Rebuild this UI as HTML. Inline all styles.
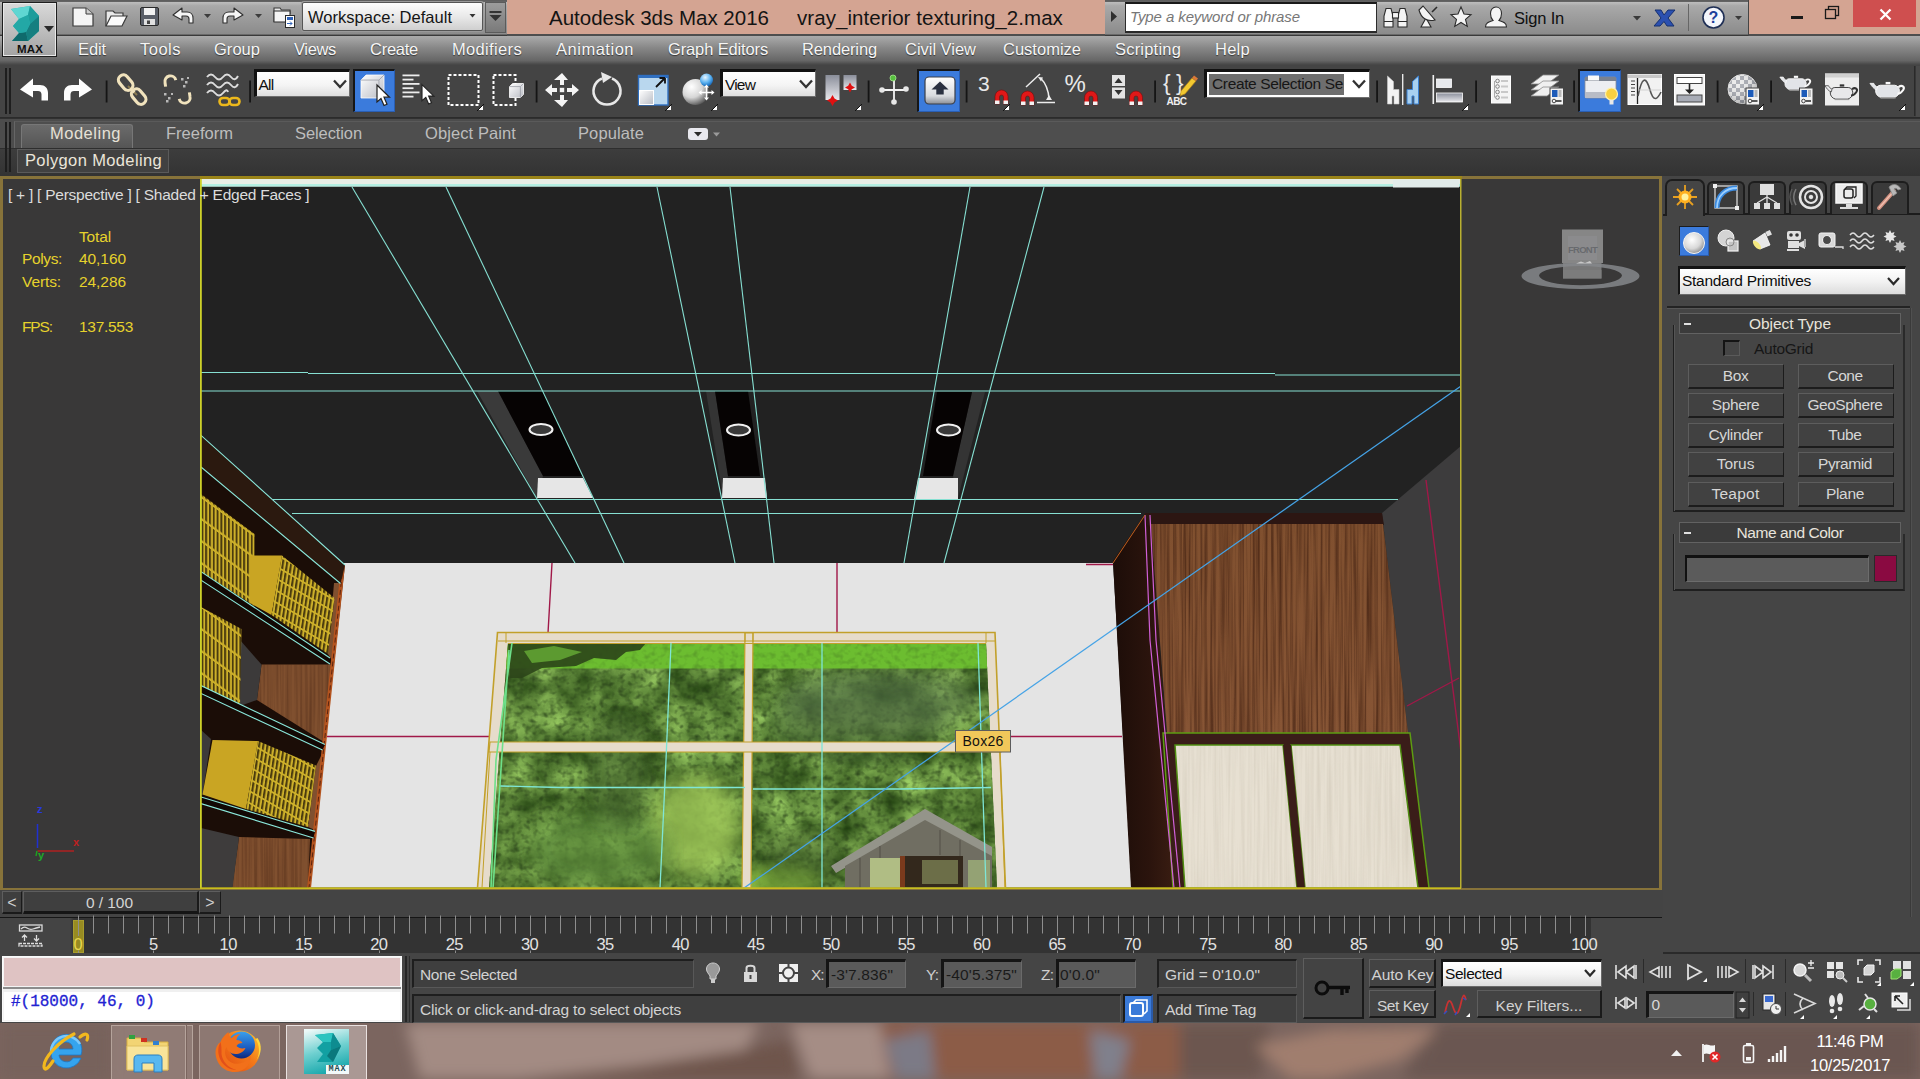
<!DOCTYPE html>
<html lang="en"><head><meta charset="utf-8"><title>Autodesk 3ds Max 2016 - vray_interior texturing_2.max</title>
<style>
html,body{margin:0;padding:0;background:#454545;}
body{width:1920px;height:1079px;position:relative;overflow:hidden;font-family:"Liberation Sans",sans-serif;}
.t{position:absolute;white-space:nowrap;}
.b{position:absolute;box-sizing:border-box;}
svg{position:absolute;overflow:visible;}
.sh{text-shadow:0 1px 1px rgba(0,0,0,.55);}
</style></head><body>
<div class="b " style="left:0px;top:0px;width:507px;height:35.5px;background:linear-gradient(#5e5e5e 0,#5e5e5e 4%,#bcbcbc 7%,#a9a9a9 16%,#8b8b8b 95%,#3a3a3a 97%);"></div>
<div class="b " style="left:507px;top:0px;width:598px;height:34px;background:#d4a492;"></div>
<div class="b " style="left:507px;top:34px;width:598px;height:1.5px;background:#4e4e4e;"></div>
<div class="b " style="left:1105px;top:0px;width:643px;height:35.5px;background:linear-gradient(#5e5e5e 0,#5e5e5e 4%,#bcbcbc 7%,#a9a9a9 16%,#8b8b8b 95%,#3a3a3a 97%);"></div>
<div class="b " style="left:1749px;top:0px;width:171px;height:34px;background:#d4a492;"></div>
<div class="b " style="left:1749px;top:34px;width:171px;height:1.5px;background:#4e4e4e;"></div>
<div class="b " style="left:1853px;top:0px;width:63px;height:26.5px;background:#cf4f4f;"></div>
<div class="b " style="left:0px;top:35.5px;width:1920px;height:29.5px;background:linear-gradient(#ababab,#888888 40%,#666666 85%,#484848 98%);"></div>
<div class="b " style="left:0px;top:65px;width:1920px;height:53px;background:#444444;border-bottom:1px solid #2b2b2b;"></div>
<div class="b " style="left:1916px;top:66px;width:4px;height:51px;background:#4a4a4a;"></div>
<div class="b " style="left:0px;top:118px;width:1920px;height:30px;background:#4c4c4c;border-top:1px solid #303030;"></div>
<div class="b " style="left:0px;top:148px;width:1920px;height:28px;background:linear-gradient(#3d3d3d,#333333);border-top:1px solid #2e2e2e;"></div>
<div class="b " style="left:14px;top:121px;width:1906px;height:27px;background:#4e4e4e;border-left:1px solid #666;border-top:1px solid #5a5a5a;"></div>
<div class="b " style="left:21px;top:124px;width:112px;height:24px;background:linear-gradient(#6b6b6b,#555555);border:1px solid #777;border-bottom:none;border-radius:3px 3px 0 0;"></div>
<div class="b " style="left:17px;top:149px;width:152px;height:24px;background:#414141;border:1px solid #5a5a5a;"></div>
<div class="b " style="left:5px;top:68px;width:2px;height:46px;background:#1e1e1e;"></div>
<div class="b " style="left:5px;top:122px;width:2px;height:50px;background:#1e1e1e;"></div>
<div class="b " style="left:9px;top:68px;width:2px;height:46px;background:#1e1e1e;"></div>
<div class="b " style="left:9px;top:122px;width:2px;height:50px;background:#1e1e1e;"></div>
<div class="b " style="left:2px;top:2px;width:55px;height:55px;background:linear-gradient(#d9d9d9,#bcbcbc 55%,#a3a3a3);border:1px solid #1d1d1d;box-shadow:inset 0 0 0 1px #e8e8e8;"></div>
<svg style="left:8px;top:5px" width="46" height="40" viewBox="0 0 46 40">
<polygon points="3,4 22,1 31,11 31,26 20,36 4,36 11,28 5,21 11,14" fill="#2bb5b2"/>
<polygon points="3,4 22,1 20,10 11,14" fill="#5fd6d2"/>
<polygon points="22,1 31,11 22,19 20,10" fill="#1d9c9b"/>
<polygon points="22,19 31,11 31,26 20,36 18,27" fill="#167f80"/>
<polygon points="4,36 11,28 18,27 20,36" fill="#0f6a6c"/>
<polygon points="5,21 11,14 20,10 22,19 18,27 11,28" fill="#23a8a6"/>
<polygon points="36,21 46,21 41,27" fill="#2a2a2a"/>
</svg><div class="t " style="left:17.0px;top:42.1px;font-size:11.5px;line-height:14px;color:#111;font-weight:bold;letter-spacing:0.146px;">MAX</div>
<svg style="left:70px;top:3px" width="230" height="30" viewBox="70 3 230 30">
<path d="M73 8h13l7 6v12h-20z" fill="#f4f4f4" stroke="#3a3a3a" stroke-width="1.2"/><path d="M86 8v6h7" fill="#cfcfcf" stroke="#3a3a3a" stroke-width="1"/>
<path d="M106 26v-15h7l2 2h8v3" fill="#e8e8e8" stroke="#3a3a3a" stroke-width="1.2"/><path d="M106 26l5-10h16l-5 10z" fill="#fafafa" stroke="#3a3a3a" stroke-width="1.2"/>
<rect x="140.500" y="7.500" width="18" height="18" rx="1.500" fill="#5a5f68" stroke="#2a2a2a"/><rect x="144" y="8" width="11" height="7" fill="#f2f2f2"/><rect x="144" y="19" width="11" height="6" fill="#e0e0e0"/><rect x="147" y="20.500" width="3" height="3.500" fill="#444"/>
<path d="M173 15l9-7v4h5c4 0 6 3 6 6v5h-4v-4c0-2-1-3-3-3h-4v4z" fill="#f6f6f6" stroke="#2f2f2f" stroke-width="1.100" stroke-linejoin="round"/>
<path d="M204 14h7l-3.500 4z" fill="#3c3c3c"/>
<path d="M243 15l-9-7v4h-5c-4 0-6 3-6 6v5h4v-4c0-2 1-3 3-3h4v4z" fill="#f6f6f6" stroke="#2f2f2f" stroke-width="1.100" stroke-linejoin="round"/>
<path d="M255 14h7l-3.500 4z" fill="#3c3c3c"/>
<path d="M274 22v-14h6l1.500 2h8.500v4" fill="#e6e6e6" stroke="#3a3a3a" stroke-width="1.100"/><rect x="274" y="11" width="16" height="11" fill="#f4f4f4" stroke="#3a3a3a" stroke-width="1.100"/>
<rect x="285.500" y="15.500" width="9" height="12" fill="#fff" stroke="#2a2a2a"/><rect x="287" y="17" width="6" height="3" fill="#2f62b8"/><path d="M287 23.500h5m-2-2l2 2-2 2" stroke="#2f62b8" fill="none"/>
</svg><div class="b " style="left:302px;top:2px;width:181px;height:29px;background:linear-gradient(#fdfdfd,#e9e9e9 50%,#cfcfcf);border:1px solid #555;border-radius:2px;box-shadow:0 0 0 1px #9a9a9a;"></div>
<div class="t " style="left:308.0px;top:6.7px;font-size:16.5px;line-height:20px;color:#151515;letter-spacing:0.020px;">Workspace: Default</div>
<svg style="left:468px;top:13px" width="10" height="6"><path d="M1.500 1h6l-3 3.500z" fill="#333"/></svg><div class="b " style="left:485px;top:2px;width:21px;height:31px;background:linear-gradient(#9c9c9c,#7a7a7a);border:1px solid #5b5b5b;"></div>
<svg style="left:488px;top:10px" width="16" height="12"><rect x="1.500" y="1" width="12" height="2" fill="#333"/><path d="M1.500 5h12l-6 6z" fill="#333"/></svg><div class="t " style="left:549.0px;top:5.2px;font-size:20.5px;line-height:25px;color:#141414;">Autodesk 3ds Max 2016</div>
<div class="t " style="left:797.0px;top:5.2px;font-size:20.5px;line-height:25px;color:#141414;letter-spacing:0.054px;">vray_interior texturing_2.max</div>
<svg style="left:1108px;top:9px" width="12" height="16"><path d="M3 2l6 5.500-6 5.500z" fill="#2e2e2e"/></svg><div class="b " style="left:1125px;top:2px;width:252px;height:31px;background:#ffffff;border:1px solid #2c2c2c;border-top:2px solid #1a1a1a;border-bottom:2px solid #2a2a2a;"></div>
<div class="t " style="left:1130.0px;top:7.7px;font-size:15px;line-height:18px;color:#777;font-style:italic;letter-spacing:-0.098px;">Type a keyword or phrase</div>
<svg style="left:1380px;top:2px" width="370" height="32" viewBox="1380 2 370 32">
<g fill="#f4f4f4" stroke="#2c2c2c" stroke-width="1.100">
<path d="M1384 27V16l2-7.500h5l2 7.500v11zM1407 27V16l-2-7.500h-5l-2 7.500v11z"/><rect x="1392.500" y="12.500" width="6" height="5.500"/><rect x="1384" y="21" width="9" height="1" fill="#2c2c2c" stroke="none"/><rect x="1398" y="21" width="9" height="1" fill="#2c2c2c" stroke="none"/>
<path d="M1421 27l5-9 5 9z"/><path d="M1419 10c2 8 8 12 16 10l-12-14z"/><path d="M1432 12l5-5" fill="none" stroke-width="1.600"/>
<path d="M1461 7l3 7 7 .6-5.500 4.800 1.800 7-6.300-3.900-6.300 3.900 1.800-7-5.500-4.800 7-.6z"/>
<path d="M1485.500 27c0-4 3-5 7.500-6.500-2-2-2.500-4-2.500-7 0-4 2.500-6.500 5.500-6.500s5.500 2.500 5.500 6.500c0 3-.5 5-2.500 7 4.500 1.500 7.500 2.500 7.500 6.500z"/>
</g>
<path d="M1633 16h8l-4 4.500z" fill="#3a3a3a"/>
<path d="M1655 10h6l3 5 4-5h7l-7 8 6 8h-7l-3-4.500-4 4.500h-6l7-8z" fill="#2b50b0" stroke="#17306f" stroke-width="1"/>
<rect x="1688" y="4" width="1" height="27" fill="#666"/>
<circle cx="1713.500" cy="17.500" r="10.500" fill="#f4f6fb" stroke="#1f2f55" stroke-width="1.600"/>
<path d="M1735 16h7l-3.500 4z" fill="#3a3a3a"/>
</svg><div class="t " style="left:1708.6px;top:7.7px;font-size:16px;line-height:19px;color:#1c3f9a;font-weight:bold;">?</div>
<div class="t " style="left:1514.0px;top:7.7px;font-size:16.5px;line-height:20px;color:#101010;letter-spacing:-0.192px;">Sign In</div>
<div class="b " style="left:1791px;top:15.5px;width:11.5px;height:3px;background:#1a1a1a;"></div>
<svg style="left:1824px;top:5px" width="18" height="16"><rect x="4.500" y="1.500" width="10" height="9" fill="none" stroke="#1a1a1a" stroke-width="1.300"/><rect x="1.500" y="4.500" width="10" height="9" fill="#d4a492" stroke="#1a1a1a" stroke-width="1.300"/></svg><svg style="left:1879px;top:8px" width="14" height="13"><path d="M1.500 1.500l10 10m0-10l-10 10" stroke="#fff" stroke-width="2.300"/></svg><div class="t sh" style="left:78.0px;top:39.2px;font-size:16.5px;line-height:20px;color:#f6f6f6;letter-spacing:-0.105px;">Edit</div>
<div class="t sh" style="left:140.0px;top:39.2px;font-size:16.5px;line-height:20px;color:#f6f6f6;letter-spacing:0.497px;">Tools</div>
<div class="t sh" style="left:214.0px;top:39.2px;font-size:16.5px;line-height:20px;color:#f6f6f6;letter-spacing:0.031px;">Group</div>
<div class="t sh" style="left:294.0px;top:39.2px;font-size:16.5px;line-height:20px;color:#f6f6f6;letter-spacing:-0.344px;">Views</div>
<div class="t sh" style="left:370.0px;top:39.2px;font-size:16.5px;line-height:20px;color:#f6f6f6;letter-spacing:-0.253px;">Create</div>
<div class="t sh" style="left:452.0px;top:39.2px;font-size:16.5px;line-height:20px;color:#f6f6f6;letter-spacing:0.340px;">Modifiers</div>
<div class="t sh" style="left:556.0px;top:39.2px;font-size:16.5px;line-height:20px;color:#f6f6f6;letter-spacing:0.516px;">Animation</div>
<div class="t sh" style="left:668.0px;top:39.2px;font-size:16.5px;line-height:20px;color:#f6f6f6;letter-spacing:-0.136px;">Graph Editors</div>
<div class="t sh" style="left:802.0px;top:39.2px;font-size:16.5px;line-height:20px;color:#f6f6f6;letter-spacing:-0.125px;">Rendering</div>
<div class="t sh" style="left:905.0px;top:39.2px;font-size:16.5px;line-height:20px;color:#f6f6f6;letter-spacing:-0.023px;">Civil View</div>
<div class="t sh" style="left:1003.0px;top:39.2px;font-size:16.5px;line-height:20px;color:#f6f6f6;letter-spacing:0.007px;">Customize</div>
<div class="t sh" style="left:1115.0px;top:39.2px;font-size:16.5px;line-height:20px;color:#f6f6f6;letter-spacing:0.201px;">Scripting</div>
<div class="t sh" style="left:1215.0px;top:39.2px;font-size:16.5px;line-height:20px;color:#f6f6f6;letter-spacing:0.266px;">Help</div>
<div class="t " style="left:50.0px;top:123.2px;font-size:16.5px;line-height:20px;color:#e6e1d6;letter-spacing:0.506px;">Modeling</div>
<div class="t " style="left:166.0px;top:123.2px;font-size:16.5px;line-height:20px;color:#bdbdbd;letter-spacing:0.010px;">Freeform</div>
<div class="t " style="left:295.0px;top:123.2px;font-size:16.5px;line-height:20px;color:#bdbdbd;letter-spacing:-0.095px;">Selection</div>
<div class="t " style="left:425.0px;top:123.2px;font-size:16.5px;line-height:20px;color:#bdbdbd;letter-spacing:0.096px;">Object Paint</div>
<div class="t " style="left:578.0px;top:123.2px;font-size:16.5px;line-height:20px;color:#bdbdbd;letter-spacing:0.111px;">Populate</div>
<div class="t " style="left:25.0px;top:149.7px;font-size:16.5px;line-height:20px;color:#ebe6da;letter-spacing:0.366px;">Polygon Modeling</div>
<div class="b " style="left:688px;top:128px;width:20px;height:12px;background:#e8e8ee;border-radius:3px;"></div>
<svg style="left:693px;top:131px" width="30" height="8"><path d="M1 1h8l-4 4.500z" fill="#2a2a2a"/><path d="M20 1.500h7l-3.500 4z" fill="#9a9a9a"/></svg><div class="b " style="left:353px;top:69px;width:42px;height:43px;background:#3b7bdc;border:2px solid #161616;border-right:1px solid #2a5fb4;border-bottom:1px solid #2a5fb4;"></div>
<div class="b " style="left:917px;top:69px;width:43px;height:43px;background:#3b7bdc;border:2px solid #161616;border-right:1px solid #2a5fb4;border-bottom:1px solid #2a5fb4;"></div>
<div class="b " style="left:1578px;top:69px;width:43px;height:43px;background:#3b7bdc;border:2px solid #161616;border-right:1px solid #2a5fb4;border-bottom:1px solid #2a5fb4;"></div>
<div class="b " style="left:254px;top:69px;width:96px;height:28px;background:linear-gradient(#ffffff,#f4f4f4 55%,#dedede);border:1px solid #6e6e6e;border-top:3px solid #121212;border-left:3px solid #121212;"></div>
<div class="t " style="left:258.5px;top:75.2px;font-size:15.5px;line-height:19px;color:#101010;letter-spacing:-0.740px;">All</div>
<div class="b " style="left:720px;top:69px;width:96px;height:28px;background:linear-gradient(#ffffff,#f4f4f4 55%,#dedede);border:1px solid #6e6e6e;border-top:3px solid #121212;border-left:3px solid #121212;"></div>
<div class="t " style="left:725.0px;top:75.2px;font-size:15.5px;line-height:19px;color:#101010;letter-spacing:-0.828px;">View</div>
<div class="b " style="left:1204px;top:69px;width:166px;height:29px;background:#ffffff;border:1px solid #6e6e6e;border-top:3px solid #121212;border-left:3px solid #121212;"></div>
<div class="b " style="left:1209px;top:73.5px;width:135px;height:21.5px;background:#6e6e6e;"></div>
<div class="t " style="left:1212.0px;top:74.2px;font-size:15.5px;line-height:19px;color:#161616;letter-spacing:-0.363px;">Create Selection Se</div>
<svg style="left:0;top:64px" width="1920" height="54" viewBox="0 64 1920 54">
<defs><linearGradient id="cubeg" x1="0" x2="1" y1="0" y2="1"><stop offset="0" stop-color="#ffffff"/><stop offset="1" stop-color="#b9bcc4"/></linearGradient><radialGradient id="sphg" cx=".35" cy=".3" r=".75"><stop offset="0" stop-color="#ffffff"/><stop offset=".55" stop-color="#d6d6d6"/><stop offset="1" stop-color="#555"/></radialGradient><radialGradient id="bsph" cx=".4" cy=".3" r=".7"><stop offset="0" stop-color="#e8f6ff"/><stop offset=".6" stop-color="#58b0f0"/><stop offset="1" stop-color="#1868b8"/></radialGradient><linearGradient id="silv" x1="0" x2="0" y1="0" y2="1"><stop offset="0" stop-color="#8a8e9a"/><stop offset="1" stop-color="#e8e8ec"/></linearGradient><linearGradient id="keyg" x1="0" x2="0" y1="0" y2="1"><stop offset="0" stop-color="#ffffff"/><stop offset=".7" stop-color="#d8dade"/><stop offset="1" stop-color="#8a8e96"/></linearGradient><pattern id="chk" width="8" height="8" patternUnits="userSpaceOnUse"><rect width="8" height="8" fill="#e8e8e8"/><rect width="4" height="4" fill="#8a8e98"/><rect x="4" y="4" width="4" height="4" fill="#8a8e98"/></pattern></defs>
<path d="M334 80.500l6 6.500 6-6.500" fill="none" stroke="#333" stroke-width="2.300"/><path d="M800 80.500l6 6.500 6-6.500" fill="none" stroke="#333" stroke-width="2.300"/><path d="M1353 80.500l6 6.500 6-6.500" fill="none" stroke="#333" stroke-width="2.300"/><path d="M20 89.500l13-11v6.500h7c5 0 8 3 8 8v7.500h-6.500v-6c0-2.500-1.500-3.500-3.500-3.500h-5v6.500z" fill="#fdfdfd"/><path d="M92 89.500l-13-11v6.500h-7c-5 0-8 3-8 8v7.500h6.500v-6c0-2.500 1.500-3.500 3.500-3.500h5v6.500z" fill="#fdfdfd"/><rect x="105.7" y="80.500" width="1.800" height="22" fill="#151515"/><rect x="249.2" y="80.500" width="1.800" height="22" fill="#151515"/><rect x="535.7" y="80.500" width="1.800" height="22" fill="#151515"/><rect x="867.7" y="80.500" width="1.800" height="22" fill="#151515"/><rect x="965.7" y="80.500" width="1.800" height="22" fill="#151515"/><rect x="1154.2" y="80.500" width="1.800" height="22" fill="#151515"/><rect x="1376.2" y="80.500" width="1.800" height="22" fill="#151515"/><rect x="1475.2" y="80.500" width="1.800" height="22" fill="#151515"/><rect x="1573.2" y="80.500" width="1.800" height="22" fill="#151515"/><rect x="1716.7" y="80.500" width="1.800" height="22" fill="#151515"/><rect x="1770.2" y="80.500" width="1.800" height="22" fill="#151515"/><g fill="none" stroke="#f1e3bd" stroke-width="3.200"><rect x="-5" y="-9" width="10" height="17" rx="5" transform="translate(126,83) rotate(-40)"/><rect x="-5" y="-9" width="10" height="17" rx="5" transform="translate(139,97) rotate(-40)"/></g><path d="M128 86l9 9" stroke="#8a7a50" stroke-width="2"/><path d="M128 86l9 9" stroke="#f1e3bd" stroke-width="3" stroke-dasharray="0 3 6 9"/><g fill="none" stroke="#f1e3bd" stroke-width="3"><path d="M165 86v-4a5.500 5.500 0 0 1 11-1" transform="rotate(-8 170 82)"/><path d="M190 93v4a5.500 5.500 0 0 1-11 1" transform="rotate(-8 185 97)"/></g><g fill="#b8b8b8"><rect x="181" y="78" width="2.500" height="2.500"/><rect x="185" y="81" width="2.500" height="2.500"/><rect x="183" y="85" width="2.500" height="2.500"/><rect x="187" y="77" width="2" height="2"/><rect x="164" y="93" width="2.500" height="2.500"/><rect x="168" y="97" width="2.500" height="2.500"/><rect x="166" y="100" width="2.500" height="2.500"/><rect x="171" y="93" width="2" height="2"/></g><g fill="none" stroke="#dcdcdc" stroke-width="2"><path d="M207 77q4-5 8 0t8 0 8 0 7-1M207 85q4-5 8 0t8 0 8 0 7-1M207 93q4-5 8 0t8 0 5-1"/></g><g fill="none" stroke="#ecb81c" stroke-width="2.600"><rect x="219.500" y="98" width="10" height="7" rx="3.500"/><rect x="229.500" y="98" width="10" height="7" rx="3.500"/></g><path d="M361 80.06l5.06-5.06h17.94v17.94l-5.06 5.06h-17.94z" fill="url(#cubeg)" stroke="#fff" stroke-width=".8"/><path d="M361 80.06h17.94v17.94M378.94 80.06l5.06-5.06" fill="none" stroke="#9a9da6" stroke-width=".8"/><path transform="translate(377,85) scale(1)" d="M0 0v17l4-3.500 3 7 3-1.300-3-7h5.500z" fill="#fff" stroke="#222" stroke-width="1.200"/><rect x="402.500" y="74.5" width="17" height="1.800" fill="#ececec"/><rect x="402.500" y="78.7" width="11" height="1.800" fill="#ececec"/><rect x="402.500" y="83" width="17" height="1.800" fill="#ececec"/><rect x="402.500" y="87.3" width="11" height="1.800" fill="#ececec"/><rect x="402.500" y="91.5" width="17" height="1.800" fill="#ececec"/><rect x="402.500" y="95.7" width="11" height="1.800" fill="#ececec"/><path transform="translate(422,84.5) scale(0.95)" d="M0 0v17l4-3.500 3 7 3-1.300-3-7h5.500z" fill="#fff" stroke="#222" stroke-width="1.200"/><rect x="448.500" y="75" width="30" height="30" fill="none" stroke="#fff" stroke-width="2" stroke-dasharray="3 2"/><path d="M478 110l5-5v5z" fill="#fff"/><path d="M477 111l7-7" stroke="#111" stroke-width="1"/><rect x="493.500" y="75" width="22" height="30" fill="none" stroke="#fff" stroke-width="2" stroke-dasharray="3 2"/><path d="M509.5 86.58l3.08-3.08h10.92v10.92l-3.08 3.08h-10.92z" fill="url(#cubeg)" stroke="#fff" stroke-width=".8"/><path d="M509.5 86.58h10.92v10.92M520.42 86.58l3.08-3.08" fill="none" stroke="#9a9da6" stroke-width=".8"/><g transform="translate(562,90)" fill="#f4f4f4"><path d="M0-17l6 7h-4v5h-4v-5h-6zM0 17l6-7h-4v-5h-4v5h-6zM-17 0l7-6v4h5v4h-5v4zM17 0l-7-6v4h-5v4h5v4z"/><rect x="-2.200" y="-2.200" width="4.400" height="4.400"/></g><path d="M602 78.500a13.500 13.500 0 1 0 10 0" fill="none" stroke="#e8e8e8" stroke-width="2.600"/><path d="M601 72l11 5-9 6z" fill="#e8e8e8"/><rect x="638.500" y="75.500" width="29.500" height="29.500" fill="#b9d7ee" stroke="#2f6fc0" stroke-width="1.400"/><rect x="638.500" y="75.500" width="29.500" height="2.500" fill="#2f6fc0"/><rect x="639.500" y="90.500" width="14" height="14" fill="url(#cubeg)" stroke="#fff"/><path d="M656 87l9-9m0 0h-5.500m5.500 0v5.500" stroke="#111" stroke-width="1.800" fill="none"/><path d="M666 110l5-5v5z" fill="#fff"/><path d="M665 111l7-7" stroke="#111" stroke-width="1"/><circle cx="695.500" cy="92" r="13" fill="url(#sphg)"/><circle cx="706.500" cy="80" r="6.500" fill="url(#bsph)"/><g stroke="#fff" stroke-width="1.500" fill="#fff"><path d="M706.500 86v13M700 92.500h13"/><path d="M706.500 84.500l2.500 3h-5zM706.500 100.500l2.500-3h-5zM698.500 92.500l3-2.500v5zM714.500 92.500l-3-2.500v5z" stroke="none"/></g><path d="M712 110l5-5v5z" fill="#fff"/><path d="M711 111l7-7" stroke="#111" stroke-width="1"/><rect x="825.500" y="75" width="14" height="25" fill="url(#silv)"/><rect x="843.500" y="75" width="13" height="15" fill="url(#silv)"/><path d="M832.500 95l2 3.500 3.500 2-3.500 2-2 3.500-2-3.500-3.500-2 3.500-2zM850 82.500l1.800 3.200 3.200 1.800-3.200 1.800-1.800 3.200-1.800-3.200-3.200-1.800 3.200-1.800z" fill="#e01010"/><path d="M856 110l5-5v5z" fill="#fff"/><path d="M855 111l7-7" stroke="#111" stroke-width="1"/><g transform="translate(894,90)"><path d="M0-11V10M-11 0H11" stroke="#f4f4f4" stroke-width="1.800"/><circle cx="-12" cy="0" r="2.800" fill="#e8e8e8"/><circle cx="12" cy="-1" r="2.800" fill="#e8e8e8"/><circle cx="0" cy="12" r="2.800" fill="#e8e8e8"/><circle cx="-1" cy="-12" r="3" fill="#58c040" stroke="#a8e890" stroke-width=".8"/></g><rect x="925" y="77" width="30" height="27" rx="4" fill="url(#keyg)" stroke="#3a3e48" stroke-width="1.200"/><path d="M940 81.500l8.500 8h-4.800v5h-7.400v-5h-4.800z" fill="#2a3040"/><g transform="translate(995,90)"><path d="M0 14V6.500a6.500 6.500 0 0 1 13 0V14h-4.500V7a2 2 0 0 0-4 0V14z" fill="#e01818" stroke="#7a0c0c" stroke-width=".6"/><rect x="0" y="10.500" width="4.500" height="3.500" fill="#f2f2f2"/><rect x="8.500" y="10.500" width="4.500" height="3.500" fill="#f2f2f2"/></g><path d="M1004 110l5-5v5z" fill="#fff"/><path d="M1003 111l7-7" stroke="#111" stroke-width="1"/><g transform="translate(1021,91)"><path d="M0 14V6.500a6.500 6.500 0 0 1 13 0V14h-4.500V7a2 2 0 0 0-4 0V14z" fill="#e01818" stroke="#7a0c0c" stroke-width=".6"/><rect x="0" y="10.500" width="4.500" height="3.500" fill="#f2f2f2"/><rect x="8.500" y="10.500" width="4.500" height="3.500" fill="#f2f2f2"/></g><path d="M1026 87l14-13M1040.500 78c5 5 8 12 8.500 21M1037 102.500h18" fill="none" stroke="#ececec" stroke-width="1.500"/><path d="M1038 77l5 .5-2 4zM1046 100l3-5 3 5z" fill="#ececec"/><g transform="translate(1084.5,91)"><path d="M0 14V6.500a6.500 6.500 0 0 1 13 0V14h-4.500V7a2 2 0 0 0-4 0V14z" fill="#e01818" stroke="#7a0c0c" stroke-width=".6"/><rect x="0" y="10.500" width="4.500" height="3.500" fill="#f2f2f2"/><rect x="8.500" y="10.500" width="4.500" height="3.500" fill="#f2f2f2"/></g><g transform="translate(1129.5,91)"><path d="M0 14V6.500a6.500 6.500 0 0 1 13 0V14h-4.500V7a2 2 0 0 0-4 0V14z" fill="#e01818" stroke="#7a0c0c" stroke-width=".6"/><rect x="0" y="10.500" width="4.500" height="3.500" fill="#f2f2f2"/><rect x="8.500" y="10.500" width="4.500" height="3.500" fill="#f2f2f2"/></g><rect x="1112" y="75" width="13" height="11" fill="#e4e4e4"/><rect x="1112" y="87.500" width="13" height="11" fill="#e4e4e4"/><path d="M1114.500 83l4-5 4 5zM1114.500 90l4 5 4-5z" fill="#333"/><path d="M1181 91l11-13 4 3-11 13-5 2z" fill="#f2c830" stroke="#a87818" stroke-width=".7"/><path d="M1192 78l2-2.500 4 3-2 2.500z" fill="#d87838"/><path d="M-100 -100l5-5v5z" fill="#fff"/><path d="M-1 1l7-7" stroke="#111" stroke-width="1"/><path d="M1387.500 104V76l6 5.500v8h5.500V104h-5v-8h-2v8z" fill="#f4f4f4" stroke="#c8c8c8" stroke-width=".6"/><rect x="1402" y="74" width="1.400" height="31" fill="#e8e8e8"/><path d="M1418.500 104V76l-6 5.500v8h-5.500V104h5v-8h2v8z" fill="#a8d0f0" stroke="#3a80d0" stroke-width="1"/><rect x="1432.500" y="75" width="1.600" height="29" fill="#f0f0f0"/><rect x="1436.500" y="79" width="15" height="8.500" fill="#e6e8ec" stroke="#fff" stroke-width=".8"/><rect x="1436.500" y="93" width="26" height="9" fill="url(#silv)" stroke="#fff" stroke-width=".8"/><path d="M1463 110l5-5v5z" fill="#fff"/><path d="M1462 111l7-7" stroke="#111" stroke-width="1"/><rect x="1491.500" y="76" width="19" height="27" fill="#f4f4f4" stroke="#fff"/><circle cx="1497.500" cy="81" r="1.800" fill="none" stroke="#777" stroke-width=".9"/><rect x="1501" y="80" width="7" height="2" fill="#c8c8c8"/><circle cx="1497.500" cy="86.5" r="1.800" fill="none" stroke="#777" stroke-width=".9"/><rect x="1501" y="85.5" width="7" height="2" fill="#c8c8c8"/><circle cx="1497.500" cy="92" r="1.800" fill="none" stroke="#777" stroke-width=".9"/><rect x="1501" y="91" width="7" height="2" fill="#c8c8c8"/><circle cx="1497.500" cy="97.5" r="1.800" fill="none" stroke="#777" stroke-width=".9"/><rect x="1501" y="96.5" width="7" height="2" fill="#c8c8c8"/><path d="M1494.500 81v16.500" stroke="#999" stroke-width=".8"/><path d="M1531 84l12-9h16l-12 9z" fill="#f0f0f0" stroke="#8a8a8a" stroke-width=".8"/><path d="M1531 90l12-9h16l-12 9z" fill="#f0f0f0" stroke="#8a8a8a" stroke-width=".8"/><path d="M1531 96l12-9h16l-12 9z" fill="#f0f0f0" stroke="#8a8a8a" stroke-width=".8"/><g transform="translate(1549.5,87.5)"><rect x=".5" y=".5" width="13.500" height="17" fill="#f2f2f2" stroke="#444"/><rect x="2.500" y="2.500" width="5.500" height="7" fill="#1c5ab8"/><rect x="9" y="2.500" width="3" height="7" fill="#b8b8b8"/><circle cx="4.500" cy="13.500" r="1.800" fill="none" stroke="#333" stroke-width=".9"/><rect x="6.500" y="12.700" width="5.500" height="1.600" fill="#333"/></g><rect x="1585" y="77" width="31" height="21" rx="1.500" fill="#eceef2" stroke="#8a8e98" stroke-width=".8"/><rect x="1585" y="77" width="31" height="4" fill="#7a8290"/><rect x="1588" y="75.500" width="11" height="5" fill="#fafafa"/><rect x="1585" y="92" width="31" height="6" fill="#b8bcc6"/><circle cx="1611.500" cy="94" r="6" fill="#f8d040" stroke="#fff1a8" stroke-width="1.200"/><rect x="1609.500" y="100" width="4" height="4.500" fill="#e8e8e8"/><rect x="1628" y="74.500" width="33.500" height="30" fill="#f2f2f2" stroke="#fff"/><rect x="1628" y="74.500" width="33.500" height="3.500" fill="#c8c8c8"/><path d="M1637.500 78v26" stroke="#222" stroke-width="1.300"/><path d="M1631 81h4M1631 84.500h4M1631 88h4M1631 91.500h4M1631 95h4" stroke="#444" stroke-width="1.200"/><path d="M1638 96c4-20 8-20 12-6s8 8 11 2" fill="none" stroke="#555" stroke-width="1.600"/><path d="M1638 90h23" stroke="#ccc" stroke-width=".8"/><rect x="1674.500" y="74.500" width="30" height="30.500" fill="#f4f4f4" stroke="#fff"/><rect x="1677" y="77.500" width="25" height="6" fill="#fff" stroke="#444" stroke-width="1"/><rect x="1677" y="95" width="25" height="7" fill="#a8acb6" stroke="#444" stroke-width="1"/><path d="M1689.500 84v6" stroke="#222" stroke-width="1.600"/><path d="M1685 89.500h9l-4.500 4.500z" fill="#222"/><circle cx="1742.500" cy="89" r="14.500" fill="url(#chk)" stroke="#e0e0e0" stroke-width="1"/><circle cx="1742.500" cy="89" r="14.500" fill="url(#sphg)" opacity=".35"/><g transform="translate(1745.5,87.5)"><rect x=".5" y=".5" width="13.500" height="17" fill="#f2f2f2" stroke="#444"/><rect x="2.500" y="2.500" width="5.500" height="7" fill="#1c5ab8"/><rect x="9" y="2.500" width="3" height="7" fill="#b8b8b8"/><circle cx="4.500" cy="13.500" r="1.800" fill="none" stroke="#333" stroke-width=".9"/><rect x="6.500" y="12.700" width="5.500" height="1.600" fill="#333"/></g><path d="M1758 110l5-5v5z" fill="#fff"/><path d="M1757 111l7-7" stroke="#111" stroke-width="1"/><g transform="translate(1796,83) scale(0.85)"><path d="M-8-5c-3 0-5 3-5 6s2 6 6 7h13c4-1 6-4 6-7s-2-6-5-6z" fill="#e2e4e8" stroke="#fafafa" stroke-width="1"/><path d="M-12 0c-3-1-5-4-7-7l4 0c1 2 2 3 4 4z" fill="#e2e4e8" stroke="#fafafa" stroke-width=".8"/><path d="M11-3c4-3 7 0 5 3s-4 4-6 4" fill="none" stroke="#fafafa" stroke-width="2.200"/><rect x="-2.500" y="-8.500" width="5" height="2.500" fill="#fafafa"/><rect x="-8" y="7.500" width="16" height="1.500" fill="#9a9a9a"/></g><g transform="translate(1799,87.5)"><rect x=".5" y=".5" width="13.500" height="17" fill="#f2f2f2" stroke="#444"/><rect x="2.500" y="2.500" width="5.500" height="7" fill="#1c5ab8"/><rect x="9" y="2.500" width="3" height="7" fill="#b8b8b8"/><circle cx="4.500" cy="13.500" r="1.800" fill="none" stroke="#333" stroke-width=".9"/><rect x="6.500" y="12.700" width="5.500" height="1.600" fill="#333"/></g><rect x="1825" y="73.500" width="34" height="32" fill="#ededed"/><rect x="1825" y="73.500" width="34" height="4" fill="#d0d0d0"/><g transform="translate(1842,92) scale(0.9)"><path d="M-8-5c-3 0-5 3-5 6s2 6 6 7h13c4-1 6-4 6-7s-2-6-5-6z" fill="#e8e8ea" stroke="#333" stroke-width="1"/><path d="M-12 0c-3-1-5-4-7-7l4 0c1 2 2 3 4 4z" fill="#e8e8ea" stroke="#333" stroke-width=".8"/><path d="M11-3c4-3 7 0 5 3s-4 4-6 4" fill="none" stroke="#333" stroke-width="2.200"/><rect x="-2.500" y="-8.500" width="5" height="2.500" fill="#333"/><rect x="-8" y="7.500" width="16" height="1.500" fill="#9a9a9a"/></g><g transform="translate(1888,90) scale(0.95)"><path d="M-8-5c-3 0-5 3-5 6s2 6 6 7h13c4-1 6-4 6-7s-2-6-5-6z" fill="#e2e4e8" stroke="#fafafa" stroke-width="1"/><path d="M-12 0c-3-1-5-4-7-7l4 0c1 2 2 3 4 4z" fill="#e2e4e8" stroke="#fafafa" stroke-width=".8"/><path d="M11-3c4-3 7 0 5 3s-4 4-6 4" fill="none" stroke="#fafafa" stroke-width="2.200"/><rect x="-2.500" y="-8.500" width="5" height="2.500" fill="#fafafa"/><rect x="-8" y="7.500" width="16" height="1.500" fill="#9a9a9a"/></g><path d="M1900 110l5-5v5z" fill="#fff"/><path d="M1899 111l7-7" stroke="#111" stroke-width="1"/><rect x="1914" y="66" width="1.500" height="50" fill="#2a2a2a"/></svg>
<div class="t " style="left:978.0px;top:71.2px;font-size:21px;line-height:25px;color:#e8e8e8;">3</div>
<div class="t " style="left:1064.5px;top:68.7px;font-size:24px;line-height:29px;color:#e8e8e8;">%</div>
<div class="t " style="left:1163.0px;top:69.2px;font-size:22.5px;line-height:27px;color:#e8e8e8;letter-spacing:-0.427px;">{ }</div>
<div class="t " style="left:1166.5px;top:96.1px;font-size:10px;line-height:12px;color:#f0f0f0;font-weight:bold;letter-spacing:-0.552px;">ABC</div>
<div class="b " style="left:0px;top:175.5px;width:1662px;height:714.5px;background:#393838;border:3px solid #87733a;border-top-width:3.5px;border-bottom-width:2px;"></div>
<div class="b " style="left:200px;top:175.5px;width:1262px;height:3.5px;background:#9a8418;"></div>
<svg style="left:0;top:0" width="1920" height="1079" viewBox="0 0 1920 1079">
<defs>
<clipPath id="rc"><rect x="201" y="179" width="1259" height="708.500"/></clipPath>
<clipPath id="gl"><polygon points="508,643 986,643 997,888 489,888"/></clipPath>
<filter id="leaf" color-interpolation-filters="sRGB" x="0" y="0" width="100%" height="100%"><feTurbulence type="fractalNoise" baseFrequency="0.030 0.034" numOctaves="4" seed="12" result="n"/><feColorMatrix in="n" type="matrix" values="0.620 0 0 0 0.050  0.720 0 0 0 0.160  0.420 0 0 0 0.010  0 0 0 0 1"/><feComposite in2="SourceAlpha" operator="in"/></filter>
<filter id="leaf2" color-interpolation-filters="sRGB" x="0" y="0" width="100%" height="100%"><feTurbulence type="fractalNoise" baseFrequency="0.16 0.17" numOctaves="2" seed="3" result="n"/><feColorMatrix in="n" type="matrix" values="0 0 0 0 0.140  0 0 0 0 0.230  0 0 0 0 0.090  0 1.700 0 0 -0.780"/><feComposite in2="SourceAlpha" operator="in"/></filter>
<filter id="wood" color-interpolation-filters="sRGB" x="0" y="0" width="100%" height="100%"><feTurbulence type="fractalNoise" baseFrequency="0.38 0.006" numOctaves="3" seed="11" result="n"/><feColorMatrix in="n" type="matrix" values="0 0 0 0 0.220  0 0 0 0 0.100  0 0 0 0 0.050  1.300 0 0 0 -0.470"/><feComposite in2="SourceAlpha" operator="in"/></filter>
<filter id="wood2" color-interpolation-filters="sRGB" x="0" y="0" width="100%" height="100%"><feTurbulence type="fractalNoise" baseFrequency="0.35 0.008" numOctaves="2" seed="5" result="n"/><feColorMatrix in="n" type="matrix" values="0 0 0 0 0.620  0 0 0 0 0.580  0 0 0 0 0.500  1.400 0 0 0 -0.500"/><feComposite in2="SourceAlpha" operator="in"/></filter>
<filter id="bl6"><feGaussianBlur stdDeviation="6"/></filter>
<filter id="bl10"><feGaussianBlur stdDeviation="10"/></filter>
<pattern id="hatch" width="3.800" height="22" patternUnits="userSpaceOnUse" patternTransform="skewY(36)"><rect width="3.800" height="22" fill="#cdb02a"/><rect x="0" y="0" width="1.900" height="19.500" fill="#4a3b0e"/></pattern><pattern id="hatch2" width="3.800" height="12" patternUnits="userSpaceOnUse" patternTransform="skewY(30) skewX(-8)"><rect width="3.800" height="12" fill="#cdb02a"/><rect x="0" y="0" width="1.900" height="10" fill="#4a3b0e"/></pattern>
<linearGradient id="sidepanel" x1="0" x2="1" y1="0" y2="0"><stop offset="0" stop-color="#1c0d08"/><stop offset="0.600" stop-color="#2b140d"/><stop offset="1" stop-color="#3a1d12"/></linearGradient>
<linearGradient id="wg" x1="0" x2="0" y1="0" y2="1"><stop offset="0" stop-color="#80502f"/><stop offset="1" stop-color="#875535"/></linearGradient>
</defs>
<g clip-path="url(#rc)">
<rect x="201" y="179" width="1259" height="709" fill="#222222"/>
<rect x="201" y="179" width="1259" height="7.500" fill="#e8eee6"/><rect x="201" y="184" width="1259" height="2.500" fill="#b4efe2"/>
<rect x="1393" y="180" width="66" height="7.500" fill="#e2ecea"/>
<polygon points="1461,446 1382,513 1385,540 1408,733 1429,888 1461,888" fill="#3d3c3d"/>
<polygon points="344,563 1113,563 1132,888 309,888" fill="#e4e4e4"/>
<polygon points="477,391 498,391 543,476 537,498" fill="#3a3a3a"/><polygon points="498,391 543,391 582,476 543,476" fill="#060303"/><polygon points="538,478 583,478 593,498 537,498" fill="#e6e6e6"/>
<polygon points="706,391 715,391 728,476 723,498" fill="#343434"/><polygon points="715,391 748,391 760,476 728,476" fill="#060303"/><polygon points="723,478 765,478 767,498 722,498" fill="#e6e6e6"/>
<polygon points="972,392 985,392 958,498 953,476" fill="#343434"/><polygon points="937,392 972,392 953,476 923,476" fill="#060303"/><polygon points="918,478 958,478 958,499 914,499" fill="#e6e6e6"/>
<ellipse cx="541" cy="429.5" rx="11.500" ry="5.500" fill="#3a3a3a" stroke="#f2f2f2" stroke-width="2"/>
<ellipse cx="738.5" cy="430" rx="11.500" ry="5.500" fill="#3a3a3a" stroke="#f2f2f2" stroke-width="2"/>
<ellipse cx="948.5" cy="430" rx="11.500" ry="5.500" fill="#3a3a3a" stroke="#f2f2f2" stroke-width="2"/>
<line x1="352" y1="187" x2="575" y2="563" stroke="#86e0d2" stroke-width="1.100"/>
<line x1="446" y1="187" x2="624" y2="563" stroke="#86e0d2" stroke-width="1.100"/>
<line x1="657" y1="187" x2="735" y2="563" stroke="#86e0d2" stroke-width="1.100"/>
<line x1="730" y1="187" x2="774" y2="563" stroke="#86e0d2" stroke-width="1.100"/>
<line x1="970" y1="187" x2="904" y2="563" stroke="#86e0d2" stroke-width="1.100"/>
<line x1="1044" y1="187" x2="944" y2="563" stroke="#86e0d2" stroke-width="1.100"/>
<path d="M201 372.500H308M308 373.500H1275M1275 375H1461M201 391H1461M273 499.500H1398M292 513.500H1141" stroke="#86e0d2" stroke-width="1.100" fill="none"/>
<polygon points="1145,514 1113,561 1131,888 1175,888 1166,733 1151,524" fill="url(#sidepanel)"/>
<polygon points="1145,513 1382,513 1384,525 1147,525" fill="#2c1612"/>
<polygon points="1151,524 1383,524 1408,733 1167,733" fill="url(#wg)"/><polygon points="1151,524 1383,524 1408,733 1167,733" filter="url(#wood)"/>
<polygon points="1163,733 1410,733 1429,888 1173,888" fill="#3a1d19" stroke="#5d9c12" stroke-width="1.500"/>
<polygon points="1175,745 1283,745 1297,888 1185,888" fill="#e7e0d2" stroke="#4f8c10" stroke-width="1.500"/><polygon points="1291,745 1400,745 1418,888 1305,888" fill="#e7e0d2" stroke="#4f8c10" stroke-width="1.500"/>
<polygon points="1176,746 1399,746 1417,888 1186,888" filter="url(#wood2)" opacity="0.250"/>
<polygon points="1283,745 1291,745 1305,888 1297,888" fill="#3a1d19"/>
<path d="M1150 515L1156 640L1180 888M1145 515L1150 640L1174 888" stroke="#d060d8" stroke-width="1.200" fill="none"/>
<path d="M1113 563L1145 515" stroke="#c06020" stroke-width="1"/>
<path d="M552 563L548 633M837 563V633M327 736.500H490M1010 736.500H1122M1086 564.500H1113M1426 480L1461 752M1407 706L1459 678" stroke="#a01848" stroke-width="1.400" fill="none"/>
<polygon points="497.500,632.500 995,632.500 1005.500,888 477.500,888" fill="#e6dccb" stroke="#c2a02a" stroke-width="1.600"/>
<g clip-path="url(#gl)"><rect x="480" y="640" width="530" height="250" fill="#5a813b"/><rect x="480" y="640" width="530" height="250" filter="url(#leaf)"/><rect x="480" y="640" width="530" height="250" filter="url(#leaf2)"/><ellipse cx="696" cy="826" rx="46" ry="50" fill="#a0c858" opacity="0.800" filter="url(#bl10)"/><ellipse cx="780" cy="880" rx="40" ry="16" fill="#8cc040" opacity="0.700" filter="url(#bl6)"/><ellipse cx="880" cy="700" rx="100" ry="30" fill="#66805a" opacity="0.450" filter="url(#bl10)"/><ellipse cx="600" cy="850" rx="70" ry="40" fill="#5f8c3c" opacity="0.700" filter="url(#bl10)"/><ellipse cx="620" cy="770" rx="30" ry="60" fill="#3c5a2a" opacity="0.450" filter="url(#bl10)"/><ellipse cx="860" cy="720" rx="90" ry="40" fill="#46633a" opacity="0.450" filter="url(#bl10)"/><ellipse cx="800" cy="860" rx="40" ry="30" fill="#3a5528" opacity="0.450" filter="url(#bl10)"/><rect x="480" y="640" width="530" height="28.500" fill="#6cbd30"/><rect x="480" y="640" width="530" height="28.500" filter="url(#leaf2)" opacity="0.350"/><path d="M508 643h138l-6 7-14 2-10 8-22-2-18 8-34 2-20 10h-12z" fill="#2c4519" opacity="0.900"/><path d="M524 651l30-5 28 6-22 8-28 3z" fill="#5c9a30"/><polygon points="831,866 925,809 992,847 992,858 925,822 836,873" fill="#94948a"/><polygon points="845,866 925,820 992,856 992,888 845,888" fill="#706e62"/><path d="M860 858v30M880 846v30M940 830v25M960 840v20" stroke="#5c5a50" stroke-width="1.500"/><rect x="870" y="858" width="30" height="30" fill="#b0bd84"/><rect x="903" y="856" width="60" height="32" fill="#33281c"/><rect x="900" y="856" width="5" height="32" fill="#7a3a1c"/><rect x="922" y="860" width="36" height="24" fill="#6c6e48"/><rect x="968" y="860" width="22" height="28" fill="#94a274"/></g>
<polygon points="745,633 753,633 751,888 742,888" fill="#e6dccb" stroke="#c2a02a" stroke-width="1.200"/>
<polygon points="490,742 1001,742 1001,752 489,752" fill="#e6dccb" stroke="#c2a02a" stroke-width="1.200"/>
<path d="M506 633v10M745 633v9M753 633v9M986 633v10M498 641H995M508 643.500H986" stroke="#c2a02a" stroke-width="1" fill="none"/>
<path d="M490 752L482 888M1000 752L1005 888" stroke="#c2a02a" stroke-width="1" fill="none"/>
<path d="M671 643L666 760L660 888M822 643V888M978 643L986 888M500 786L560 787.500H745M753 789H900L991 787.500" stroke="#7fe6d6" stroke-width="1.300" fill="none"/>
<path d="M512 643L496 760L491 888M509 650L493 888" stroke="#6ee08a" stroke-width="1.600" fill="none"/>
<polygon points="201,435 345,565 309,888 201,888" fill="#1b0d07"/>
<polygon points="334,583 341,583 333,662 328,654" fill="#80502f"/><polygon points="261.500,664.500 331.500,664.500 324,742 257,700" fill="#80502f"/><polygon points="261.500,664.500 331.500,664.500 324,742 257,700" filter="url(#wood)" opacity="0.550"/>
<polygon points="316,766 323,752 315,830 308,827" fill="#80502f"/><polygon points="239,837 310,839 308,888 232,888" fill="#80502f"/><polygon points="239,837 310,839 308,888 232,888" filter="url(#wood)" opacity="0.550"/>
<polygon points="341,566 345,565 311,888 307,888" fill="#b4541f"/>
<path d="M343 566L309 888" stroke="#5a2410" stroke-width="1" stroke-dasharray="5 3"/>
<polygon points="240,640 261.500,664.500 257,700 240,706" fill="#3c3a3a"/><polygon points="201,730 211,739 202.500,795 201,795" fill="#3c3a3a"/><polygon points="201,828 239,837 232.500,888 201,888" fill="#3e3c3c"/>
<polygon points="201,494 254.500,534 254.500,606 201,572" fill="url(#hatch)"/>
<polygon points="250,555.500 282,555.500 271.500,615 250,603" fill="#c9a523"/><polygon points="282,555.500 334.500,598 328,654 271.500,615" fill="url(#hatch2)"/>
<polygon points="201,607 241.500,629 240,706 201,686" fill="url(#hatch)"/>
<polygon points="212.500,740 258,741 246,809 202.500,794.500" fill="#c9a523"/><polygon points="258,741 316,765.500 308,827 246,809" fill="url(#hatch2)"/>
<polygon points="201,435 345,565 340.500,583.500 201,467" fill="#2b190f"/>
<polygon points="201,571.500 330,658 330,664 201,580.500" fill="#120804"/><polygon points="201,685.500 325,744.500 322.500,750 201,693.500" fill="#120804"/><polygon points="201,797 315,831.500 313.500,838 201,803.500" fill="#120804"/>
<path d="M201 435.300L345 565M201 467L340.500 583.500M201 571.700L330 658M201 580.200L330 664M201 685.600L325 744.600M201 693.400L322.500 750M201 797L315 831.400M201 803.600L313.500 838" stroke="#8ae6da" stroke-width="1.100" fill="none"/>
<line x1="1461" y1="386" x2="744" y2="888" stroke="#45a3e6" stroke-width="1.250"/>
</g>
<rect x="200" y="179" width="1.800" height="709" fill="#cdd02a"/><rect x="1460" y="179" width="1.500" height="709" fill="#b9b030"/><rect x="200" y="887.300" width="1261" height="1.700" fill="#c9bd1e"/>
<rect x="955.500" y="730.500" width="55" height="21.500" fill="#f1c85a" stroke="#5c5c5c" stroke-width="1"/>
<path d="M37.500 848V824" stroke="#2030d0" stroke-width="1.500"/><path d="M37.500 851H74" stroke="#b02020" stroke-width="1.500"/><path d="M37 851l-1 5" stroke="#20a020" stroke-width="1.500"/>
<rect x="1563" y="263" width="38.500" height="15.500" fill="#787878"/><path fill-rule="evenodd" d="M1521.500 276a59 13 0 1 0 118 0a59 13 0 1 0-118 0zM1539 275.600a41.500 9.600 0 1 0 83 0a41.500 9.600 0 1 0-83 0z" fill="#85878b" opacity="0.850"/><rect x="1563" y="270" width="38.500" height="8.500" fill="#7c7c7c" opacity="0.850"/><rect x="1562" y="229.500" width="41" height="33.500" fill="#868686"/><rect x="1568" y="236" width="29" height="24" fill="#8b8b8d"/><path d="M1576 263.500l5-2 4 1.500 5-2 2 2.500z" fill="#c8c8c8"/>
</svg>
<div class="t " style="left:962.5px;top:732.6px;font-size:14px;line-height:17px;color:#111;letter-spacing:0.263px;">Box26</div>
<div class="t " style="left:1568.0px;top:243.6px;font-size:9.5px;line-height:11px;color:#686a6e;font-weight:bold;letter-spacing:-0.741px;">FRONT</div>
<div class="t " style="left:37.0px;top:803.1px;font-size:11px;line-height:13px;color:#2838e0;font-weight:bold;">z</div>
<div class="t " style="left:73.0px;top:836.1px;font-size:11px;line-height:13px;color:#c02020;font-weight:bold;">x</div>
<div class="t " style="left:38.0px;top:849.1px;font-size:11px;line-height:13px;color:#20a828;font-weight:bold;">y</div>
<div class="t " style="left:8.0px;top:184.5px;font-size:15.5px;line-height:19px;color:#dcdcdc;letter-spacing:-0.249px;">[ + ] [ Perspective ] [ Shaded + Edged Faces ]</div>
<div class="t " style="left:79.0px;top:226.7px;font-size:15.5px;line-height:19px;color:#e6d22c;letter-spacing:-0.150px;">Total</div>
<div class="t " style="left:22.0px;top:249.4px;font-size:15.5px;line-height:19px;color:#e6d22c;letter-spacing:-0.370px;">Polys:</div>
<div class="t " style="left:79.0px;top:249.4px;font-size:15.5px;line-height:19px;color:#e6d22c;letter-spacing:-0.073px;">40,160</div>
<div class="t " style="left:22.0px;top:271.9px;font-size:15.5px;line-height:19px;color:#e6d22c;letter-spacing:-0.107px;">Verts:</div>
<div class="t " style="left:79.0px;top:271.9px;font-size:15.5px;line-height:19px;color:#e6d22c;letter-spacing:-0.073px;">24,286</div>
<div class="t " style="left:22.0px;top:316.9px;font-size:15.5px;line-height:19px;color:#e6d22c;letter-spacing:-1.117px;">FPS:</div>
<div class="t " style="left:79.0px;top:316.9px;font-size:15.5px;line-height:19px;color:#e6d22c;letter-spacing:-0.295px;">137.553</div>
<div class="b " style="left:1663px;top:176px;width:257px;height:776px;background:#454545;"></div>
<div class="b " style="left:1704px;top:213px;width:216px;height:2px;background:#1c1c1c;"></div>
<div class="b " style="left:1707px;top:181px;width:38px;height:33px;background:#3a3a3a;border:2px solid #1d1d1d;border-bottom:none;border-radius:6px 6px 0 0;"></div>
<div class="b " style="left:1748px;top:181px;width:38px;height:33px;background:#3a3a3a;border:2px solid #1d1d1d;border-bottom:none;border-radius:6px 6px 0 0;"></div>
<div class="b " style="left:1789px;top:181px;width:38px;height:33px;background:#3a3a3a;border:2px solid #1d1d1d;border-bottom:none;border-radius:6px 6px 0 0;"></div>
<div class="b " style="left:1830px;top:181px;width:38px;height:33px;background:#3a3a3a;border:2px solid #1d1d1d;border-bottom:none;border-radius:6px 6px 0 0;"></div>
<div class="b " style="left:1871px;top:181px;width:38px;height:33px;background:#3a3a3a;border:2px solid #1d1d1d;border-bottom:none;border-radius:6px 6px 0 0;"></div>
<div class="b " style="left:1665px;top:179px;width:40px;height:37px;background:#454545;border:2px solid #1d1d1d;border-bottom:none;border-radius:7px 7px 0 0;"></div>
<div class="b " style="left:1663px;top:214px;width:4px;height:2px;background:#1c1c1c;"></div>
<svg style="left:1664px;top:178px" width="256" height="40" viewBox="1664 178 256 40">
<g transform="translate(1685,197)"><g stroke="#e8a020" stroke-width="1.800"><path d="M0-12V12M-12 0H12M-8-8L8 8M-8 8L8-8"/></g><circle r="6.500" fill="#ffb020"/><circle r="3.500" fill="#fff2a0"/></g>
<g transform="translate(1726,197)"><rect x="-11" y="-11" width="22" height="22" fill="none" stroke="#d8d8d8" stroke-width="1.300"/><path d="M-9 11C-9-2 0-9 11-9" fill="none" stroke="#3a8ae0" stroke-width="5"/><path d="M-9 11C-9-2 0-9 11-9" fill="none" stroke="#9cd0ff" stroke-width="1.800"/><rect x="-13" y="-13" width="4" height="4" fill="#eee"/><rect x="9" y="9" width="4" height="4" fill="#eee"/></g>
<g transform="translate(1767,197)" fill="#e0e0e0"><rect x="-7" y="-13" width="14" height="11"/><rect x="-13" y="6" width="6" height="6"/><rect x="-3" y="6" width="6" height="6"/><rect x="7" y="6" width="6" height="6"/><path d="M0-2V6M0 0L-10 6M0 0L10 6" stroke="#e0e0e0" stroke-width="1.300" fill="none"/></g>
<g transform="translate(1811,197)" fill="none" stroke="#e4e4e4"><circle r="11" stroke-width="2.500"/><circle r="6" stroke-width="2"/><circle r="1.800" fill="#e4e4e4"/><path d="M-15-8a16 16 0 0 0 0 16" stroke="#777" stroke-width="1.500"/><path d="M-19-8a18 18 0 0 0 0 16" stroke="#5a5a5a" stroke-width="1.500"/></g>
<g transform="translate(1849,196)"><rect x="-13" y="-12" width="26" height="19" fill="#ececec" stroke="#f8f8f8" stroke-width="1.500"/><rect x="-5" y="-7" width="9" height="9" rx="2" fill="none" stroke="#222" stroke-width="1.500"/><path d="M-4-7l2-2h9v9l-2 2" fill="none" stroke="#222" stroke-width="1.300"/><rect x="-3" y="8" width="6" height="3" fill="#ddd"/><rect x="-9" y="11" width="18" height="2" fill="#ddd"/></g>
<g transform="translate(1889,197)"><path d="M-10 11L5-6" stroke="#d09080" stroke-width="4" stroke-linecap="round"/><path d="M-10 11L5-6" stroke="#f0c0b0" stroke-width="1.200"/><path d="M0-10c4-4 9-3 12 2l-3 1c-1-2-3-2-4-1l3 4-4 3z" fill="#b8b8b8" stroke="#8a8a8a" stroke-width=".8"/></g>
</svg><div class="b " style="left:1679px;top:226px;width:30px;height:30px;background:#3b7bdc;border:1px solid #1d1d1d;border-right-color:#2a5cae;border-bottom-color:#2a5cae;"></div>
<svg style="left:1664px;top:222px" width="256" height="40" viewBox="1664 222 256 40">
<defs><radialGradient id="sph" cx=".4" cy=".35" r=".7"><stop offset="0" stop-color="#fff"/><stop offset=".6" stop-color="#d8d8d8"/><stop offset="1" stop-color="#8a8a8a"/></radialGradient></defs>
<circle cx="1694" cy="243" r="10.500" fill="url(#sph)" stroke="#f4f4f4" stroke-width="1"/>
<g transform="translate(1728,241)"><circle cx="-2" cy="-3" r="8" fill="#d4d4d4" stroke="#f0f0f0"/><rect x="0" y="0" width="10" height="10" fill="#c4c4c4" stroke="#f4f4f4" stroke-width="1.200"/><circle cx="2" cy="1" r="4" fill="none" stroke="#888" stroke-width="1"/></g>
<g transform="translate(1762,241)"><path d="M-9 0L3-8L8 4L-2 8Z" fill="#e8e8e8" stroke="#fff" stroke-width=".8"/><path d="M-9 0C-6 6-3 8-2 8L-9 0Z" fill="#f0e070"/><ellipse cx="-5" cy="4" rx="5.500" ry="2.500" transform="rotate(48 -5 4)" fill="#f4e880"/><rect x="4" y="-10" width="5" height="5" fill="#e0e0e0" transform="rotate(-25 6 -8)"/></g>
<g transform="translate(1795,241)" fill="#e0e0e0"><rect x="-8" y="-10" width="14" height="9" rx="2"/><circle cx="-4" cy="-6" r="1.800" fill="#333"/><circle cx="2" cy="-6" r="1.800" fill="#333"/><rect x="-7" y="0" width="11" height="7"/><path d="M4 2l6-3v9l-6-3z"/><rect x="-8" y="8" width="12" height="2"/><rect x="9" y="-2" width="2" height="8" fill="#aaa"/></g>
<g transform="translate(1829,241)"><rect x="-10" y="-8" width="16" height="14" rx="2" fill="#d8d8d8" stroke="#f4f4f4"/><circle cx="-2" cy="-1" r="4.500" fill="#4a4a4a" stroke="#eee" stroke-width="1.200"/><path d="M6 6h8v2" stroke="#ddd" fill="none" stroke-width="1.300"/></g>
<g transform="translate(1862,241)" fill="none" stroke="#dedede" stroke-width="1.500"><path d="M-12-6q3-4 6 0t6 0 6 0 6 0M-12 0q3-4 6 0t6 0 6 0 6 0M-12 6q3-4 6 0t6 0 6 0 6 0"/></g>
<g transform="translate(1896,241)" fill="#e6e6e6"><path d="M-6-11l1.500 3 3-1-1 3 3 1.500-3 1.500 1 3-3-1-1.500 3-1.500-3-3 1 1-3-3-1.500 3-1.500-1-3 3 1z"/><path d="M4-1l1.500 3 3-1-1 3 3 1.500-3 1.500 1 3-3-1-1.500 3-1.500-3-3 1 1-3-3-1.500 3-1.500-1-3 3 1z" fill="#c8c8c8"/></g>
</svg><div class="b " style="left:1678px;top:266px;width:228px;height:29px;background:linear-gradient(#ffffff,#f2f2f2 50%,#dcdcdc);border:1px solid #6a6a6a;border-top:3px solid #141414;border-left:2px solid #141414;"></div>
<div class="t " style="left:1682.0px;top:271.2px;font-size:15.5px;line-height:19px;color:#0c0c0c;letter-spacing:-0.285px;">Standard Primitives</div>
<svg style="left:1886px;top:276px" width="16" height="12"><path d="M2 2l5.500 6 5.500-6" fill="none" stroke="#2a2a2a" stroke-width="2.200"/></svg><div class="b " style="left:1667px;top:306px;width:243px;height:2px;background:#232323;"></div>
<div class="b " style="left:1667px;top:308px;width:243px;height:1px;background:#565656;"></div>
<div class="b " style="left:1910px;top:308px;width:1px;height:640px;background:#3a3a3a;"></div>
<div class="b " style="left:1911px;top:308px;width:1px;height:640px;background:#505050;"></div>
<div class="b " style="left:1673px;top:325px;width:232px;height:187px;background:transparent;border:2px solid #1f1f1f;border-top:none;border-right-color:#2a2a2a;"></div>
<div class="b " style="left:1674px;top:325px;width:1px;height:186px;background:#555;"></div>
<div class="b " style="left:1679px;top:313px;width:222px;height:21px;background:#3b3b3b;border:1px solid #626262;"></div>
<div class="t " style="left:1749.0px;top:314.2px;font-size:15.5px;line-height:19px;color:#e8e4dc;letter-spacing:-0.041px;">Object Type</div>
<div class="b " style="left:1684px;top:323px;width:7px;height:2px;background:#e0e0e0;"></div>
<div class="b " style="left:1723px;top:340px;width:17px;height:16px;background:#454545;border:2px solid #141414;border-right:1px solid #5a5a5a;border-bottom:1px solid #5a5a5a;"></div>
<div class="t " style="left:1754.0px;top:339.2px;font-size:15.5px;line-height:19px;color:#161616;letter-spacing:-0.273px;">AutoGrid</div>
<div class="b " style="left:1688px;top:364px;width:96px;height:24.5px;background:#414141;border:1px solid #5d5d5d;border-right-color:#1c1c1c;border-bottom:2px solid #1c1c1c;"></div>
<div class="t " style="left:1722.8px;top:366.2px;font-size:15.5px;line-height:19px;color:#d6d6d6;letter-spacing:-0.406px;">Box</div>
<div class="b " style="left:1797.5px;top:364px;width:96px;height:24.5px;background:#414141;border:1px solid #5d5d5d;border-right-color:#1c1c1c;border-bottom:2px solid #1c1c1c;"></div>
<div class="t " style="left:1827.5px;top:366.2px;font-size:15.5px;line-height:19px;color:#d6d6d6;letter-spacing:-0.516px;">Cone</div>
<div class="b " style="left:1688px;top:393px;width:96px;height:24.5px;background:#414141;border:1px solid #5d5d5d;border-right-color:#1c1c1c;border-bottom:2px solid #1c1c1c;"></div>
<div class="t " style="left:1711.8px;top:395.2px;font-size:15.5px;line-height:19px;color:#d6d6d6;letter-spacing:-0.417px;">Sphere</div>
<div class="b " style="left:1797.5px;top:393px;width:96px;height:24.5px;background:#414141;border:1px solid #5d5d5d;border-right-color:#1c1c1c;border-bottom:2px solid #1c1c1c;"></div>
<div class="t " style="left:1807.5px;top:395.2px;font-size:15.5px;line-height:19px;color:#d6d6d6;letter-spacing:-0.479px;">GeoSphere</div>
<div class="b " style="left:1688px;top:423px;width:96px;height:24.5px;background:#414141;border:1px solid #5d5d5d;border-right-color:#1c1c1c;border-bottom:2px solid #1c1c1c;"></div>
<div class="t " style="left:1708.5px;top:425.2px;font-size:15.5px;line-height:19px;color:#d6d6d6;letter-spacing:-0.355px;">Cylinder</div>
<div class="b " style="left:1797.5px;top:423px;width:96px;height:24.5px;background:#414141;border:1px solid #5d5d5d;border-right-color:#1c1c1c;border-bottom:2px solid #1c1c1c;"></div>
<div class="t " style="left:1828.2px;top:425.2px;font-size:15.5px;line-height:19px;color:#d6d6d6;letter-spacing:-0.316px;">Tube</div>
<div class="b " style="left:1688px;top:452px;width:96px;height:24.5px;background:#414141;border:1px solid #5d5d5d;border-right-color:#1c1c1c;border-bottom:2px solid #1c1c1c;"></div>
<div class="t " style="left:1716.8px;top:454.2px;font-size:15.5px;line-height:19px;color:#d6d6d6;letter-spacing:-0.081px;">Torus</div>
<div class="b " style="left:1797.5px;top:452px;width:96px;height:24.5px;background:#414141;border:1px solid #5d5d5d;border-right-color:#1c1c1c;border-bottom:2px solid #1c1c1c;"></div>
<div class="t " style="left:1818.0px;top:454.2px;font-size:15.5px;line-height:19px;color:#d6d6d6;letter-spacing:-0.406px;">Pyramid</div>
<div class="b " style="left:1688px;top:482px;width:96px;height:24.5px;background:#414141;border:1px solid #5d5d5d;border-right-color:#1c1c1c;border-bottom:2px solid #1c1c1c;"></div>
<div class="t " style="left:1711.5px;top:484.2px;font-size:15.5px;line-height:19px;color:#d6d6d6;letter-spacing:0.240px;">Teapot</div>
<div class="b " style="left:1797.5px;top:482px;width:96px;height:24.5px;background:#414141;border:1px solid #5d5d5d;border-right-color:#1c1c1c;border-bottom:2px solid #1c1c1c;"></div>
<div class="t " style="left:1826.0px;top:484.2px;font-size:15.5px;line-height:19px;color:#d6d6d6;letter-spacing:-0.331px;">Plane</div>
<div class="b " style="left:1673px;top:534px;width:232px;height:57px;background:transparent;border:2px solid #1f1f1f;border-top:none;border-right-color:#2a2a2a;"></div>
<div class="b " style="left:1674px;top:534px;width:1px;height:56px;background:#555;"></div>
<div class="b " style="left:1679px;top:522px;width:222px;height:21px;background:#3b3b3b;border:1px solid #626262;"></div>
<div class="t " style="left:1736.5px;top:523.2px;font-size:15.5px;line-height:19px;color:#e8e4dc;letter-spacing:-0.420px;">Name and Color</div>
<div class="b " style="left:1684px;top:532px;width:7px;height:2px;background:#e0e0e0;"></div>
<div class="b " style="left:1685px;top:555px;width:184px;height:27px;background:#5b5b5b;border-top:3px solid #111;border-left:2px solid #111;border-right:1px solid #6c6c6c;border-bottom:1px solid #6c6c6c;"></div>
<div class="b " style="left:1874px;top:555px;width:23px;height:27px;background:#8a0a41;border:1px solid #2a2a2a;"></div>
<div class="b " style="left:0px;top:890px;width:1663px;height:27px;background:#444444;"></div>
<div class="b " style="left:2px;top:891px;width:20px;height:23px;background:#3e3e3e;border:1px solid #5e5e5e;border-right-color:#1a1a1a;border-bottom:2px solid #1a1a1a;"></div>
<div class="b " style="left:199px;top:891px;width:22px;height:23px;background:#3e3e3e;border:1px solid #5e5e5e;border-right-color:#1a1a1a;border-bottom:2px solid #1a1a1a;"></div>
<div class="b " style="left:23px;top:891px;width:176px;height:23px;background:#3f3f3f;border:1px solid #5e5e5e;border-right:2px solid #1a1a1a;border-bottom:3px solid #151515;"></div>
<div class="t " style="left:7.3px;top:892.7px;font-size:16px;line-height:19px;color:#cfcfcf;">&lt;</div>
<div class="t " style="left:205.3px;top:892.7px;font-size:16px;line-height:19px;color:#cfcfcf;">&gt;</div>
<div class="t " style="left:86.0px;top:893.2px;font-size:15.5px;line-height:19px;color:#d4d4d4;letter-spacing:-0.062px;">0 / 100</div>
<div class="b " style="left:0px;top:917px;width:1663px;height:37px;background:#444444;"></div>
<div class="b " style="left:70px;top:917px;width:1521px;height:35.5px;background:linear-gradient(90deg,#444 0,#333 4px);"></div>
<div class="b " style="left:0px;top:916.8px;width:1662px;height:1.6px;background:#161616;"></div>
<div class="b " style="left:1591px;top:918.4px;width:72px;height:36px;background:#454545;"></div>
<div class="b " style="left:1663px;top:917px;width:257px;height:35px;background:#454545;"></div>
<div class="b " style="left:73px;top:919.5px;width:11px;height:33px;background:#978b22;border:1px solid #a89c2c;"></div>
<svg style="left:0;top:914px" width="1663" height="40" viewBox="0 914 1663 40"><path d="M78.5 915.500V936M78.5 950.500V953M93.5 915.500V933.500M108.5 915.500V933.500M123.5 915.500V933.500M138.5 915.500V933.500M153.5 915.500V936M153.5 950.500V953M168.5 915.500V933.500M183.5 915.500V933.500M198.5 915.500V933.500M214.5 915.500V933.500M229.5 915.500V936M229.5 950.500V953M244.5 915.500V933.500M259.5 915.500V933.500M274.5 915.500V933.500M289.5 915.500V933.500M304.5 915.500V936M304.5 950.500V953M319.5 915.500V933.500M334.5 915.500V933.500M349.5 915.500V933.500M364.5 915.500V933.500M379.5 915.500V936M379.5 950.500V953M394.5 915.500V933.500M409.5 915.500V933.500M425.5 915.500V933.500M440.5 915.500V933.500M455.5 915.500V936M455.5 950.500V953M470.5 915.500V933.500M485.5 915.500V933.500M500.5 915.500V933.500M515.5 915.500V933.500M530.5 915.500V936M530.5 950.500V953M545.5 915.500V933.500M560.5 915.500V933.500M575.5 915.500V933.500M590.5 915.500V933.500M605.5 915.500V936M605.5 950.500V953M620.5 915.500V933.500M635.5 915.500V933.500M651.5 915.500V933.500M666.5 915.500V933.500M681.5 915.500V936M681.5 950.500V953M696.5 915.500V933.500M711.5 915.500V933.500M726.5 915.500V933.500M741.5 915.500V933.500M756.5 915.500V936M756.5 950.500V953M771.5 915.500V933.500M786.5 915.500V933.500M801.5 915.500V933.500M816.5 915.500V933.500M831.5 915.500V936M831.5 950.500V953M846.5 915.500V933.500M862.5 915.500V933.500M877.5 915.500V933.500M892.5 915.500V933.500M907.5 915.500V936M907.5 950.500V953M922.5 915.500V933.500M937.5 915.500V933.500M952.5 915.500V933.500M967.5 915.500V933.500M982.5 915.500V936M982.5 950.500V953M997.5 915.500V933.500M1012.5 915.500V933.500M1027.5 915.500V933.500M1042.5 915.500V933.500M1057.5 915.500V936M1057.5 950.500V953M1073.5 915.500V933.500M1088.5 915.500V933.500M1103.5 915.500V933.500M1118.5 915.500V933.500M1133.5 915.500V936M1133.5 950.500V953M1148.5 915.500V933.500M1163.5 915.500V933.500M1178.5 915.500V933.500M1193.5 915.500V933.500M1208.5 915.500V936M1208.5 950.500V953M1223.5 915.500V933.500M1238.5 915.500V933.500M1253.5 915.500V933.500M1268.5 915.500V933.500M1284.5 915.500V936M1284.5 950.500V953M1299.5 915.500V933.500M1314.5 915.500V933.500M1329.5 915.500V933.500M1344.5 915.500V933.500M1359.5 915.500V936M1359.5 950.500V953M1374.5 915.500V933.500M1389.5 915.500V933.500M1404.5 915.500V933.500M1419.5 915.500V933.500M1434.5 915.500V936M1434.5 950.500V953M1449.5 915.500V933.500M1464.5 915.500V933.500M1479.5 915.500V933.500M1494.5 915.500V933.500M1510.5 915.500V936M1510.5 950.500V953M1525.5 915.500V933.500M1540.5 915.500V933.500M1555.5 915.500V933.500M1570.5 915.500V933.500M1585.5 915.500V936M1585.5 950.500V953" stroke="#8e8e8e" stroke-width="1" fill="none"/><g fill="none" stroke="#dcdcdc" stroke-width="1.300"><rect x="19.500" y="925" width="22.500" height="6"/><path d="M21 929q3-3 6-1t6 1 7-2M24.500 941v-6m-2.500 2.500l2.500-2.500 2.500 2.500M36.500 935v6m-2.500-2.500l2.500 2.500 2.500-2.500"/><rect x="19" y="943.500" width="23" height="2.500" stroke-dasharray="3 1"/></g></svg><div class="t " style="left:73.5px;top:934.0px;font-size:16.5px;line-height:20px;color:#e6d64e;letter-spacing:-0.6px;">0</div>
<div class="t " style="left:148.9px;top:934.0px;font-size:16.5px;line-height:20px;color:#e2e2e2;letter-spacing:-0.6px;">5</div>
<div class="t " style="left:219.6px;top:934.0px;font-size:16.5px;line-height:20px;color:#e2e2e2;letter-spacing:-0.6px;">10</div>
<div class="t " style="left:295.0px;top:934.0px;font-size:16.5px;line-height:20px;color:#e2e2e2;letter-spacing:-0.6px;">15</div>
<div class="t " style="left:370.3px;top:934.0px;font-size:16.5px;line-height:20px;color:#e2e2e2;letter-spacing:-0.6px;">20</div>
<div class="t " style="left:445.7px;top:934.0px;font-size:16.5px;line-height:20px;color:#e2e2e2;letter-spacing:-0.6px;">25</div>
<div class="t " style="left:521.0px;top:934.0px;font-size:16.5px;line-height:20px;color:#e2e2e2;letter-spacing:-0.6px;">30</div>
<div class="t " style="left:596.4px;top:934.0px;font-size:16.5px;line-height:20px;color:#e2e2e2;letter-spacing:-0.6px;">35</div>
<div class="t " style="left:671.7px;top:934.0px;font-size:16.5px;line-height:20px;color:#e2e2e2;letter-spacing:-0.6px;">40</div>
<div class="t " style="left:747.1px;top:934.0px;font-size:16.5px;line-height:20px;color:#e2e2e2;letter-spacing:-0.6px;">45</div>
<div class="t " style="left:822.4px;top:934.0px;font-size:16.5px;line-height:20px;color:#e2e2e2;letter-spacing:-0.6px;">50</div>
<div class="t " style="left:897.8px;top:934.0px;font-size:16.5px;line-height:20px;color:#e2e2e2;letter-spacing:-0.6px;">55</div>
<div class="t " style="left:973.1px;top:934.0px;font-size:16.5px;line-height:20px;color:#e2e2e2;letter-spacing:-0.6px;">60</div>
<div class="t " style="left:1048.5px;top:934.0px;font-size:16.5px;line-height:20px;color:#e2e2e2;letter-spacing:-0.6px;">65</div>
<div class="t " style="left:1123.8px;top:934.0px;font-size:16.5px;line-height:20px;color:#e2e2e2;letter-spacing:-0.6px;">70</div>
<div class="t " style="left:1199.2px;top:934.0px;font-size:16.5px;line-height:20px;color:#e2e2e2;letter-spacing:-0.6px;">75</div>
<div class="t " style="left:1274.5px;top:934.0px;font-size:16.5px;line-height:20px;color:#e2e2e2;letter-spacing:-0.6px;">80</div>
<div class="t " style="left:1349.9px;top:934.0px;font-size:16.5px;line-height:20px;color:#e2e2e2;letter-spacing:-0.6px;">85</div>
<div class="t " style="left:1425.2px;top:934.0px;font-size:16.5px;line-height:20px;color:#e2e2e2;letter-spacing:-0.6px;">90</div>
<div class="t " style="left:1500.6px;top:934.0px;font-size:16.5px;line-height:20px;color:#e2e2e2;letter-spacing:-0.6px;">95</div>
<div class="t " style="left:1571.3px;top:934.0px;font-size:16.5px;line-height:20px;color:#e2e2e2;letter-spacing:-0.6px;">100</div>
<div class="b " style="left:0px;top:954px;width:1920px;height:69px;background:#454545;"></div>
<div class="b " style="left:2px;top:956px;width:400px;height:66px;background:#f4f4f4;border:1px solid #fafafa;"></div>
<div class="b " style="left:4px;top:958px;width:396px;height:28px;background:#dfc3c3;"></div>
<div class="b " style="left:3px;top:987px;width:398px;height:2px;background:#8c8c8c;"></div>
<div class="b " style="left:3px;top:989px;width:398px;height:3px;background:#f0f0f0;"></div>
<div class="b " style="left:4px;top:992px;width:396px;height:28px;background:#ffffff;"></div>
<div class="t " style="left:11.0px;top:993.2px;font-size:16px;line-height:19px;color:#2222d2;font-family:'Liberation Mono',monospace;letter-spacing:-0.009px;-webkit-text-stroke:0.3px #2222d2;">#(18000, 46, 0)</div>
<div class="b " style="left:405px;top:956px;width:2px;height:66px;background:#262626;"></div>
<div class="b " style="left:409px;top:956px;width:1px;height:66px;background:#2c2c2c;"></div>
<div class="b " style="left:412px;top:959px;width:282px;height:29px;background:#3f3f3f;border:1px solid #585858;border-top:2px solid #1e1e1e;border-left:2px solid #1e1e1e;"></div>
<div class="t " style="left:420.0px;top:964.7px;font-size:15.5px;line-height:19px;color:#d2d2d2;letter-spacing:-0.363px;">None Selected</div>
<div class="b " style="left:412px;top:994px;width:709px;height:29px;background:#3f3f3f;border:1px solid #585858;border-top:2px solid #1e1e1e;border-left:2px solid #1e1e1e;"></div>
<div class="t " style="left:420.0px;top:999.7px;font-size:15.5px;line-height:19px;color:#d2d2d2;letter-spacing:-0.191px;">Click or click-and-drag to select objects</div>
<svg style="left:700px;top:958px" width="110" height="30" viewBox="700 958 110 30">
<path d="M713 963c-4 0-6.500 3-6.500 6 0 3 2 4.500 3.500 7v3h6v-3c1.500-2.500 3.500-4 3.500-7 0-3-2.500-6-6.500-6z" fill="#9a9a9a" stroke="#d0d0d0" stroke-width="1"/><rect x="711" y="979" width="4" height="4" fill="#ccc"/>
<path d="M746.500 972v-4c0-3 8-3 8 0v4" fill="none" stroke="#d8d8d8" stroke-width="2"/><rect x="744" y="972" width="13" height="10" fill="#d8d8d8"/><rect x="749.500" y="975" width="2" height="4" fill="#444"/>
<rect x="779" y="964" width="19" height="18" fill="#f0f0f0"/><circle cx="788.500" cy="973" r="5.500" fill="#f0f0f0" stroke="#454545" stroke-width="2"/><path d="M788.500 964v4m0 10v4m-9.500-9h4m11 0h4" stroke="#454545" stroke-width="2"/>
</svg><div class="t " style="left:811.0px;top:964.7px;font-size:15.5px;line-height:19px;color:#cfcfcf;letter-spacing:-1.078px;">X:</div>
<div class="b " style="left:826px;top:959px;width:80px;height:29px;background:#5a5a5a;border:1px solid #6a6a6a;border-top:3px solid #151515;border-left:3px solid #151515;"></div>
<div class="t " style="left:831.0px;top:964.7px;font-size:15.5px;line-height:19px;color:#1a1a1a;letter-spacing:0.106px;">-3'7.836"</div>
<div class="t " style="left:926.0px;top:964.7px;font-size:15.5px;line-height:19px;color:#cfcfcf;letter-spacing:-0.648px;">Y:</div>
<div class="b " style="left:941px;top:959px;width:81px;height:29px;background:#5a5a5a;border:1px solid #6a6a6a;border-top:3px solid #151515;border-left:3px solid #151515;"></div>
<div class="t " style="left:946.0px;top:964.7px;font-size:15.5px;line-height:19px;color:#1a1a1a;letter-spacing:0.133px;">-40'5.375"</div>
<div class="t " style="left:1041.0px;top:964.7px;font-size:15.5px;line-height:19px;color:#cfcfcf;letter-spacing:-0.641px;">Z:</div>
<div class="b " style="left:1056px;top:959px;width:80px;height:29px;background:#5a5a5a;border:1px solid #6a6a6a;border-top:3px solid #151515;border-left:3px solid #151515;"></div>
<div class="t " style="left:1060.0px;top:964.7px;font-size:15.5px;line-height:19px;color:#1a1a1a;letter-spacing:0.227px;">0'0.0"</div>
<div class="b " style="left:1157px;top:959px;width:140px;height:29px;background:#3f3f3f;border:1px solid #585858;border-top:2px solid #1e1e1e;border-left:2px solid #1e1e1e;"></div>
<div class="t " style="left:1165.0px;top:964.7px;font-size:15.5px;line-height:19px;color:#d2d2d2;letter-spacing:0.056px;">Grid = 0'10.0"</div>
<div class="b " style="left:1157px;top:994px;width:140px;height:29px;background:#3f3f3f;border:1px solid #585858;border-top:2px solid #1e1e1e;border-left:2px solid #1e1e1e;"></div>
<div class="t " style="left:1165.0px;top:999.7px;font-size:15.5px;line-height:19px;color:#d2d2d2;letter-spacing:-0.293px;">Add Time Tag</div>
<div class="b " style="left:1123px;top:994px;width:30px;height:29px;background:#3a7ad8;border:2px solid #1c1c1c;border-right-color:#2a5aa8;border-bottom-color:#2a5aa8;"></div>
<svg style="left:1128px;top:998px" width="22" height="22"><rect x="2" y="5" width="13" height="13" rx="2" fill="none" stroke="#fff" stroke-width="2"/><path d="M5 5l3-3h11v11l-3 3" fill="none" stroke="#fff" stroke-width="1.600"/></svg><div class="b " style="left:1303px;top:958px;width:61px;height:61px;background:#434343;border:1px solid #5e5e5e;border-right:2px solid #1a1a1a;border-bottom:2px solid #1a1a1a;"></div>
<svg style="left:1312px;top:976px" width="44" height="24"><circle cx="10" cy="12" r="6" fill="none" stroke="#0c0c0c" stroke-width="3"/><path d="M16 11.500h22M30 12v7M35 12v5" stroke="#0c0c0c" stroke-width="3.400" fill="none"/></svg><div class="b " style="left:1369px;top:959px;width:67px;height:29px;background:#434343;border:1px solid #5e5e5e;border-right:2px solid #1a1a1a;border-bottom:2px solid #1a1a1a;"></div>
<div class="t " style="left:1371.5px;top:965.2px;font-size:15.5px;line-height:19px;color:#d2d2d2;letter-spacing:-0.117px;">Auto Key</div>
<div class="b " style="left:1369px;top:990px;width:67px;height:28px;background:#434343;border:1px solid #5e5e5e;border-right:2px solid #1a1a1a;border-bottom:2px solid #1a1a1a;"></div>
<div class="t " style="left:1377.0px;top:995.7px;font-size:15.5px;line-height:19px;color:#d2d2d2;letter-spacing:-0.473px;">Set Key</div>
<div class="b " style="left:1441px;top:959px;width:161px;height:28px;background:linear-gradient(#ffffff,#f4f4f4 50%,#dddddd);border:1px solid #6a6a6a;border-top:3px solid #141414;border-left:2px solid #141414;"></div>
<div class="t " style="left:1445.0px;top:963.7px;font-size:15.5px;line-height:19px;color:#0c0c0c;letter-spacing:-0.418px;">Selected</div>
<svg style="left:1583px;top:968px" width="16" height="12"><path d="M2 2l5 5.500 5-5.500" fill="none" stroke="#2a2a2a" stroke-width="2.200"/></svg><div class="b " style="left:1477px;top:990px;width:125px;height:28px;background:#434343;border:1px solid #5e5e5e;border-right:2px solid #1a1a1a;border-bottom:2px solid #1a1a1a;"></div>
<div class="t " style="left:1495.5px;top:995.7px;font-size:15.5px;line-height:19px;color:#d2d2d2;letter-spacing:0.060px;">Key Filters...</div>
<svg style="left:1442px;top:992px" width="32" height="28"><path d="M3 21C6 6 8 6 11 15s5 9 8-4 4-6 5-3" fill="none" stroke="#c83232" stroke-width="1.800"/><path d="M2 22l3-3M13 23l2-3M21 6l3 2" stroke="#3050c0" stroke-width="1.500"/><path d="M24 25l4-4v4z" fill="#fff"/></svg><svg style="left:1610px;top:955px" width="310" height="66" viewBox="1610 956 310 66">
<g fill="none" stroke="#e0e0e0" stroke-width="1.600">
<path d="M1616 966v14M1636 966v14M1618 973l8-6v12zM1626 973l8-6v12z"/>
<path d="M1650 973l9-5v10zM1662 967v12M1666 967v12M1670 967v12"/>
<path d="M1688 966l13 7-13 7z" stroke-width="1.800"/>
<path d="M1718 967v12M1722 967v12M1726 967v12M1729 968l9 5-9 5z"/>
<path d="M1753 966v14M1773 966v14M1755 967l8 6-8 6zM1763 967l8 6-8 6z"/>
<path d="M1616 998v12M1636 998v12M1618 1004l7-5v10zM1634 1004l-7-5v10z"/>
</g>
<rect x="1643" y="960" width="1" height="24" fill="#2a2a2a"/><rect x="1745" y="960" width="1" height="24" fill="#2a2a2a"/><rect x="1785" y="960" width="1" height="24" fill="#2a2a2a"/><rect x="1785" y="993" width="1" height="24" fill="#2a2a2a"/><rect x="1753" y="993" width="1" height="24" fill="#2a2a2a"/>
<path d="M1703 983l4-4v4zM1800 1020l4-4v4zM1833 1020l4-4v4zM1866 1020l4-4v4zM1877 987l4-4v4zM1910 987l4-4v4z" fill="#fff"/>
<g transform="translate(1803,972)"><circle cx="-3" cy="-1" r="6" fill="#d8d8d8" stroke="#f4f4f4" stroke-width="1.500"/><path d="M2 4l6 6" stroke="#bbb" stroke-width="3"/><path d="M5-8h6M8-11v6M5-3h6" stroke="#eee" stroke-width="1.300"/></g>
<g transform="translate(1836,972)" fill="#e4e4e4"><rect x="-9" y="-9" width="7" height="7"/><rect x="0" y="-9" width="7" height="7"/><rect x="-9" y="0" width="7" height="7"/><circle cx="4" cy="4" r="4" fill="#bbb" stroke="#eee"/><path d="M7 7l4 4" stroke="#ccc" stroke-width="2"/></g>
<g transform="translate(1869,972)"><path d="M-11-6v-5h5M6-11h5v5M11 6v5h-5M-6 11h-5v-5" fill="none" stroke="#e8e8e8" stroke-width="1.600"/><path d="M-5-3l3-3h7v7l-3 3h-7z" fill="#d4d4d4" stroke="#f4f4f4"/></g>
<g transform="translate(1902,972)"><rect x="-9" y="-10" width="8" height="8" fill="#e0e0e0"/><rect x="1" y="-10" width="8" height="8" fill="#e0e0e0"/><rect x="1" y="0" width="8" height="8" fill="#e0e0e0"/><path d="M-11 1l4-3h6v7l-4 3h-6z" fill="#58b040" stroke="#9ce070"/></g>
<g transform="translate(1771,1005)"><rect x="-8" y="-10" width="12" height="16" fill="#e8e8e8" stroke="#2a2a2a"/><rect x="-6" y="-8" width="8" height="6" fill="#3a6ad0"/><circle cx="5" cy="5" r="5.500" fill="#f0f0f0" stroke="#444"/><path d="M5 2v3h3" stroke="#333" fill="none"/></g>
<g transform="translate(1803,1005)"><path d="M-9-10l21 9.500-21 9.500M0-6q-6 6 0 12" fill="none" stroke="#d8d8d8" stroke-width="1.600"/></g>
<g transform="translate(1836,1005)" fill="#e8e8e8"><ellipse cx="-4" cy="-3" rx="3" ry="6"/><ellipse cx="4" cy="-5" rx="3" ry="6"/><circle cx="-4" cy="7" r="2.300"/><circle cx="4" cy="5" r="2.300"/></g>
<g transform="translate(1869,1005)"><circle cx="1" cy="0" r="6" fill="#58b040" stroke="#e8e8e8" stroke-width="1.500"/><path d="M-10 6l5-4M-4-10l3 4M8 8l-3-3" stroke="#e0e0e0" stroke-width="2"/></g>
<g transform="translate(1902,1004)"><rect x="-10" y="-10" width="15" height="14" fill="#eee" stroke="#fff"/><path d="M-7-7l8 8m-8-8h5m-5 0v5" stroke="#222" stroke-width="1.600" fill="none"/><path d="M8-4v11h-13" stroke="#ddd" fill="none" stroke-width="1.500"/></g>
</svg><div class="b " style="left:1646px;top:990.5px;width:88px;height:27.5px;background:#5a5a5a;border:1px solid #6a6a6a;border-top:3px solid #151515;border-left:3px solid #151515;"></div>
<div class="t " style="left:1651.5px;top:994.7px;font-size:15.5px;line-height:19px;color:#d8d8d8;">0</div>
<svg style="left:1736px;top:992px" width="14" height="26"><rect x="0" y="0" width="13" height="26" fill="#3f3f3f" stroke="#222"/><path d="M3 10l3.500-4.500 3.500 4.500zM3 16l3.500 4.500 3.500-4.500z" fill="#d8d8d8"/></svg><div class="b " style="left:1663px;top:951.5px;width:257px;height:2px;background:#2a2a2a;"></div>
<div class="b " style="left:0px;top:1023px;width:1920px;height:56px;background:#7b655f;"></div>
<svg style="left:0;top:1023px" width="1920" height="56" viewBox="0 1023 1920 56"><defs><filter id="tb8" x="-10%" y="-50%" width="120%" height="200%"><feGaussianBlur stdDeviation="7"/></filter><clipPath id="tbc"><rect x="0" y="1023" width="1920" height="56"/></clipPath></defs>
<g clip-path="url(#tbc)"><g filter="url(#tb8)">
<polygon points="405,1023 760,1023 745,1050 640,1066 520,1079 420,1079" fill="#a38b83"/>
<polygon points="745,1050 640,1066 520,1079 800,1079 790,1040" fill="#6e544c"/>
<polygon points="790,1023 880,1023 890,1079 810,1079" fill="#a58d85"/>
<polygon points="880,1023 1190,1023 1180,1079 890,1079" fill="#8c5b47"/>
<polygon points="885,1040 930,1030 935,1079 895,1079" fill="#7c7a86"/>
<polygon points="1090,1030 1130,1040 1120,1079 1095,1079" fill="#80808c"/>
<polygon points="1180,1023 1270,1023 1260,1079 1180,1079" fill="#6c5650"/>
<polygon points="1255,1045 1330,1030 1440,1028 1400,1060 1330,1079 1290,1079" fill="#a07e6e"/>
<polygon points="1440,1023 1920,1023 1920,1079 1400,1079" fill="#6b5751"/>
<polygon points="0,1023 110,1023 110,1079 0,1079" fill="#77625c"/>
</g></g></svg><div class="b " style="left:111px;top:1025px;width:75px;height:54px;background:rgba(255,240,235,0.16);border:1px solid rgba(255,240,230,0.35);border-bottom:none;"></div>
<div class="b " style="left:187px;top:1025px;width:6px;height:54px;background:rgba(255,240,235,0.16);border:1px solid rgba(255,240,230,0.35);border-bottom:none;border-left:none;"></div>
<div class="b " style="left:199px;top:1025px;width:81px;height:54px;background:rgba(255,240,235,0.14);border:1px solid rgba(255,240,230,0.33);border-bottom:none;"></div>
<div class="b " style="left:286px;top:1025px;width:81px;height:54px;background:rgba(255,245,245,0.36);border:1px solid rgba(255,250,250,0.75);border-bottom:none;"></div>
<svg style="left:30px;top:1024px" width="340" height="55" viewBox="30 1024 340 55">
<defs><linearGradient id="ffx" x1="1" x2="0" y1="0" y2="1"><stop offset="0" stop-color="#ffc830"/><stop offset=".45" stop-color="#f47a18"/><stop offset="1" stop-color="#dc4412"/></linearGradient><linearGradient id="ffg" x1="0" x2="0" y1="0" y2="1"><stop offset="0" stop-color="#3aa0ec"/><stop offset=".6" stop-color="#1c5cc0"/><stop offset="1" stop-color="#10287c"/></linearGradient>
<linearGradient id="mx" x1="0.200" x2="0.500" y1="0" y2="1"><stop offset="0" stop-color="#ecf9f8"/><stop offset=".5" stop-color="#6fd0d0"/><stop offset="1" stop-color="#17a7ab"/></linearGradient></defs>
<g transform="translate(66,1051)"><path d="M-15 1a15.500 15.500 0 1 1 30 3h-22a7.500 7.500 0 0 0 14 3h8a15.500 15.500 0 0 1-30-6zm8-3h14a7 7 0 0 0-14 0z" fill="#35a4ee" stroke="#1c78c8" stroke-width=".8"/><path d="M-15 1a15.500 15.500 0 0 1 29-8" fill="none" stroke="#7cc8fa" stroke-width="2.500"/><path d="M14-14c6-5 9-3 7 3M-13 10c-6 9-9 10-9 5 0-8 14-24 30-32" fill="none" stroke="#f2b81e" stroke-width="3.200" stroke-linecap="round"/></g>
<g transform="translate(148,1052)"><path d="M-21-14h14l3 4h24v28h-41z" fill="#f2d474" stroke="#d8b040"/><rect x="-19" y="-17" width="6" height="4" fill="#30a040"/><rect x="-7" y="-14" width="6" height="4" fill="#d03020"/><rect x="5" y="-11" width="6" height="4" fill="#3080d0"/><path d="M-21-6h41v24h-41z" fill="#f8e49a" stroke="#e0c060"/><path d="M-14 20v-13c0-3 2-4 4-4h20c2 0 4 1 4 4v13h-8v-9h-12v9z" fill="#58b8f0" stroke="#2a7fc0"/></g>
<g transform="translate(239.500,1051)"><circle r="20.500" fill="url(#ffx)"/><circle cx="2" cy="-6" r="13.500" fill="url(#ffg)"/><path d="M-19-9c2-5 5-8 8-10 0 3 1 5 3 6 3-3 6-4 9-4-3 2-4 4-4 6 3 0 5 1 6 3-3 0-5 1-6 3 2 2 5 3 9 2-2 4-6 6-10 6-5 0-8-3-9-7-2 3-2 7 0 11 3 5 9 7 15 5 4-1 7-4 9-8 1 9-6 17-16 17-11 0-19-9-19-20 0-4 2-8 5-10z" fill="#f2701a"/><path d="M-19-9c-3 5-3 12 0 18 3 6 9 10 16 10-8-2-14-8-15-16 0-5 0-9-1-12z" fill="#e2501a"/><path d="M16-12c4 6 5 14 1 21 5-6 6-15 1-22z" fill="#ffd83a"/></g>
<rect x="304" y="1029" width="45" height="45" fill="url(#mx)"/><polygon points="315,1035 333,1033 341,1046 333,1062 317,1062 323,1054 317,1048 323,1042" fill="#12a0a2"/><polygon points="315,1035 333,1033 331,1042 323,1042" fill="#2cc4c0"/><polygon points="333,1033 341,1046 331,1050 331,1042" fill="#0e8c90"/><polygon points="331,1050 341,1046 333,1062 327,1056" fill="#0b787c"/><rect x="326" y="1065" width="23" height="9" fill="#f2fafa"/>
</svg><div class="t " style="left:328.5px;top:1064.1px;font-size:8.5px;line-height:10px;color:#1e4a50;font-family:'Liberation Mono',monospace;font-weight:bold;letter-spacing:0.906px;">MAX</div>
<svg style="left:1665px;top:1040px" width="130" height="26" viewBox="1665 1040 130 26">
<path d="M1671 1056l5.500-6 5.500 6z" fill="#f0f0f0"/>
<path d="M1703 1044v18" stroke="#f4f4f4" stroke-width="1.800"/><path d="M1704 1045c4-2 6 2 11 0v9c-5 2-7-2-11 0z" fill="#f4f4f4"/><circle cx="1715" cy="1057" r="5.500" fill="#e02828"/><path d="M1712.500 1054.500l5 5m0-5l-5 5" stroke="#fff" stroke-width="1.600"/>
<rect x="1743.500" y="1045.500" width="10" height="17" rx="1.500" fill="none" stroke="#f4f4f4" stroke-width="1.600"/><rect x="1746" y="1043" width="5" height="2.500" fill="#f4f4f4"/><rect x="1746" y="1057" width="5" height="3.500" fill="#f4f4f4"/>
<path d="M1769 1062v-3M1773 1062v-6M1777 1062v-9M1781 1062v-12M1785 1062v-16" stroke="#f4f4f4" stroke-width="2.400"/>
</svg><div class="t " style="left:1816.5px;top:1030.7px;font-size:16.5px;line-height:20px;color:#ffffff;letter-spacing:-0.297px;">11:46 PM</div>
<div class="t " style="left:1810.0px;top:1054.7px;font-size:16.5px;line-height:20px;color:#ffffff;letter-spacing:-0.253px;">10/25/2017</div>
</body></html>
